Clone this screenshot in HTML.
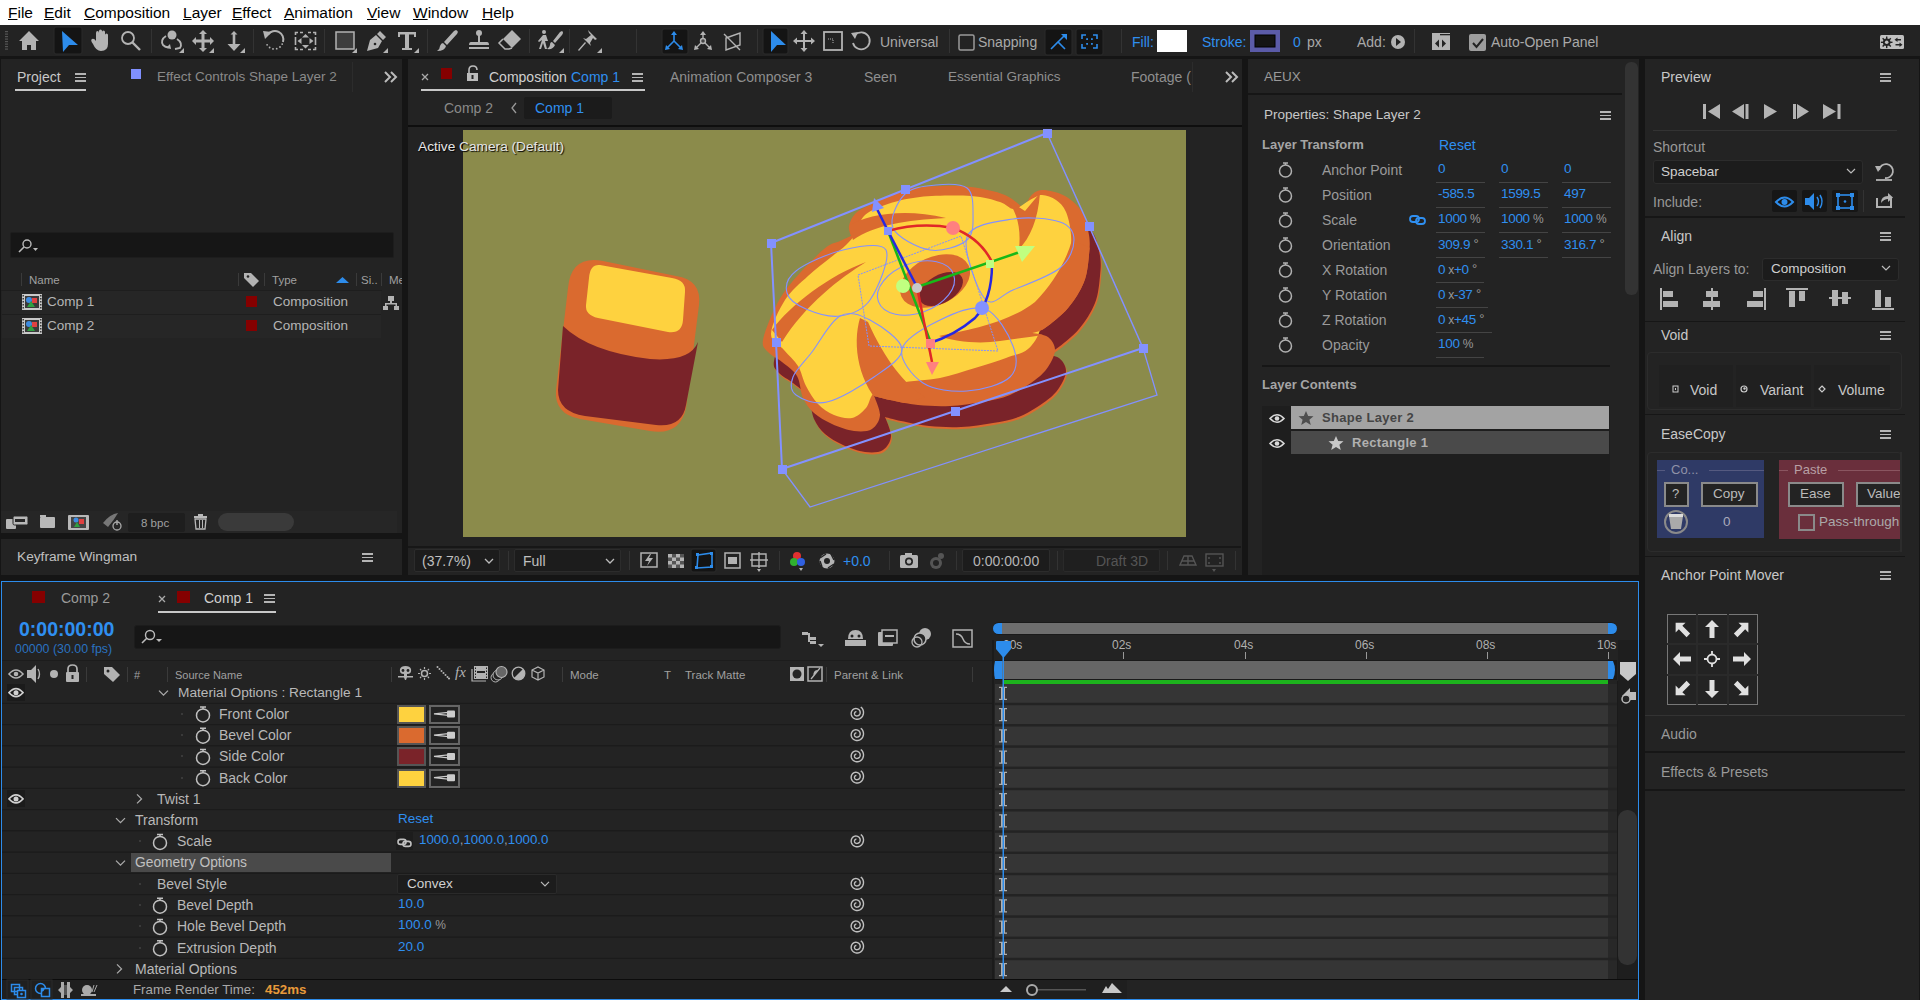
<!DOCTYPE html>
<html><head><meta charset="utf-8">
<style>
*{box-sizing:border-box;margin:0;padding:0}
html,body{width:1920px;height:1000px;overflow:hidden;background:#151515;font-family:"Liberation Sans",sans-serif;font-size:14px;color:#a9a9a9}
.a{position:absolute}
.t{position:absolute;white-space:nowrap;line-height:16px}
.pnl{position:absolute;background:#232323}
.blue{color:#2f8ff0}
.ham{position:absolute;width:11px;height:9px;background:linear-gradient(#b4b4b4 0 1.6px,transparent 1.6px 3.7px,#b4b4b4 3.7px 5.3px,transparent 5.3px 7.4px,#b4b4b4 7.4px 9px)}
svg{position:absolute;overflow:visible}
</style></head><body>

<!-- MENU BAR -->
<div class="a" style="left:0;top:0;width:1920px;height:25px;background:#fff"></div>
<div class="t" style="left:8px;top:4px;font-size:15.5px;color:#000;line-height:18px"><u>F</u>ile</div>
<div class="t" style="left:44px;top:4px;font-size:15.5px;color:#000;line-height:18px"><u>E</u>dit</div>
<div class="t" style="left:84px;top:4px;font-size:15.5px;color:#000;line-height:18px"><u>C</u>omposition</div>
<div class="t" style="left:183px;top:4px;font-size:15.5px;color:#000;line-height:18px"><u>L</u>ayer</div>
<div class="t" style="left:232px;top:4px;font-size:15.5px;color:#000;line-height:18px"><u>E</u>ffect</div>
<div class="t" style="left:284px;top:4px;font-size:15.5px;color:#000;line-height:18px"><u>A</u>nimation</div>
<div class="t" style="left:367px;top:4px;font-size:15.5px;color:#000;line-height:18px"><u>V</u>iew</div>
<div class="t" style="left:413px;top:4px;font-size:15.5px;color:#000;line-height:18px"><u>W</u>indow</div>
<div class="t" style="left:482px;top:4px;font-size:15.5px;color:#000;line-height:18px"><u>H</u>elp</div>


<!-- TOOLBAR -->
<div class="a" style="left:0;top:25px;width:1920px;height:31px;background:#232323"></div>


<svg class="a" style="left:0;top:0" width="1920" height="60" viewBox="0 0 1920 60">
 <g fill="#b3b3b3" stroke="none">
  <!-- grip -->
  <g fill="#555"><rect x="5" y="31.0" width="3" height="1.2"/><rect x="5" y="33.5" width="3" height="1.2"/><rect x="5" y="36.0" width="3" height="1.2"/><rect x="5" y="38.5" width="3" height="1.2"/><rect x="5" y="41.0" width="3" height="1.2"/><rect x="5" y="43.5" width="3" height="1.2"/><rect x="5" y="46.0" width="3" height="1.2"/><rect x="5" y="48.5" width="3" height="1.2"/></g>
  <!-- home -->
  <path d="M29 31 L19 41 L22 41 L22 50 L27 50 L27 45 L31 45 L31 50 L36 50 L36 41 L39 41 Z"/>
  <!-- selection box -->
  <rect x="54" y="27" width="28" height="27" rx="2" fill="#141414" stroke="#2a2a2a"/>
  <path d="M62 31 L78 45 L69 45 L63 52 Z" fill="#2d8ceb"/>
  <!-- hand -->
  <path d="M93 44 Q90 40 92 39 Q94 38 96 41 L96 33 Q96 31 97.5 31 Q99 31 99 33 L99 39 L99 31 Q99 29.5 100.5 29.5 Q102 29.5 102 31 L102 39 L102 32 Q102 30.5 103.5 30.5 Q105 30.5 105 32 L105 40 L105 35 Q105 33.5 106.5 33.5 Q108 33.5 108 35 L108 44 Q108 51 101 51 Q96 51 93 44Z"/>
  <!-- zoom -->
  <circle cx="128" cy="38" r="6" fill="none" stroke="#b3b3b3" stroke-width="1.8"/>
  <path d="M132 42 L140 50" stroke="#b3b3b3" stroke-width="2.4"/>
  <rect x="151" y="29" width="1" height="24" fill="#333"/>
  <!-- orbit -->
  <circle cx="172" cy="35" r="4.5"/>
  <path d="M166 36 Q160 40 163 45 Q166 48 170 47 M177 39 Q183 43 180 48 L175 49" fill="none" stroke="#b3b3b3" stroke-width="1.8"/>
  <path d="M166 48 L170 44 L171 49Z"/>
  <path d="M179 53 L184 48 L184 53Z"/>
  <!-- pan cross -->
  <path d="M203 30 L207 34 L204.5 34 L204.5 39.5 L210 39.5 L210 37 L214 41 L210 45 L210 42.5 L204.5 42.5 L204.5 48 L207 48 L203 52 L199 48 L201.5 48 L201.5 42.5 L196 42.5 L196 45 L192 41 L196 37 L196 39.5 L201.5 39.5 L201.5 34 L199 34Z"/>
  <path d="M209 53 L214 48 L214 53Z"/>
  <!-- dolly -->
  <path d="M234 31 L237.5 34.5 L235.3 34.5 L235.3 44 L240.5 44 L234 51 L227.5 44 L232.7 44 L232.7 34.5 L230.5 34.5Z"/>
  <path d="M240 53 L245 48 L245 53Z"/>
  <rect x="253" y="29" width="1" height="24" fill="#333"/>
  <!-- rotate -->
  <path d="M268 34.5 A8.5 8.5 0 0 1 283 42" fill="none" stroke="#b3b3b3" stroke-width="2"/>
  <path d="M263 31 L272 32 L265 39 Z"/>
  <circle cx="282.2" cy="44.1" r="0.9"/><circle cx="280.0" cy="47.0" r="0.9"/><circle cx="276.7" cy="48.7" r="0.9"/><circle cx="273.0" cy="48.9" r="0.9"/><circle cx="269.6" cy="47.5" r="0.9"/><circle cx="267.1" cy="44.8" r="0.9"/>
  <!-- roto box -->
  <path d="M295.5 35 L295.5 32.5 L298 32.5 M300 32.5 L303 32.5 M308 32.5 L311 32.5 M313 32.5 L315.5 32.5 L315.5 35 M315.5 47 L315.5 49.5 L313 49.5 M311 49.5 L308 49.5 M303 49.5 L300 49.5 M298 49.5 L295.5 49.5 L295.5 47 M295.5 37 L295.5 45 M315.5 37 L315.5 45" fill="none" stroke="#b3b3b3" stroke-width="1.6" stroke-dasharray="none"/>
  <path d="M302 37.5 L305.5 34 L309 37.5Z M302 45 L305.5 48.5 L309 45Z M297.5 41 L301.5 38 L301.5 44Z M313.5 41 L309.5 38 L309.5 44Z"/>
  <rect x="324" y="29" width="1" height="24" fill="#333"/>
  <!-- rectangle -->
  <rect x="336" y="32" width="18" height="17" fill="#3d3d3d" stroke="#b3b3b3" stroke-width="1.5"/>
  <path d="M352 53 L357 48 L357 53Z"/>
  <!-- pen -->
  <path d="M380 31 L386 37 L383 40 L377 34Z M376 35 L382 41 L378 48 L367 51 L370 40Z"/>
  <circle cx="375" cy="44" r="1.3" fill="#232323"/>
  <path d="M383 53 L388 48 L388 53Z"/>
  <!-- T -->
  <path d="M398 32 L416 32 L416 37 L414 37 L414 34.5 L409 34.5 L409 48 L412 48 L412 50 L402 50 L402 48 L405 48 L405 34.5 L400 34.5 L400 37 L398 37Z"/>
  <path d="M414 53 L419 48 L419 53Z"/>
  <rect x="427" y="29" width="1" height="24" fill="#333"/>
  <!-- brush -->
  <path d="M456 30 Q459 31 457 34 L447 45 L444 42 L454 31Z M443 43 L446 46 Q445 51 437 51 Q440 49 440 46 Q441 43 443 43Z"/>
  <!-- stamp -->
  <circle cx="479" cy="33" r="3"/>
  <path d="M478 35 L480 35 L480 42 L487 42 Q489 42 489 45 L469 45 Q469 42 471 42 L478 42Z"/>
  <rect x="469" y="47" width="20" height="2"/>
  <!-- eraser -->
  <path d="M512 30 L521 39 L512 48 L503 39Z"/>
  <path d="M503 39 L499 43 L505 49 L509 49 L512 48" fill="none" stroke="#b3b3b3" stroke-width="1.5"/>
  <rect x="529" y="29" width="1" height="24" fill="#333"/>
  <!-- roto brush -->
  <circle cx="544" cy="32" r="2"/>
  <path d="M543 35 L546 35 L548 41 L545 41 L547 49 L545 49 L543 43 L541 49 L539 49 L542 40 L539 42 L538 41 Z"/>
  <path d="M562 31 Q564 32 562 35 L555 43 L553 41 L560 32Z M552 42 L555 45 Q553 50 547 49 Q550 47 550 45 Q550 42 552 42Z"/>
  <path d="M559 53 L564 48 L564 53Z"/>
  <rect x="569" y="29" width="1" height="24" fill="#333"/>
  <!-- pin -->
  <path d="M588 30 L597 39 L595 40 L593 38 L590 43 L591 46 L583 38 L586 39 L591 35 L589 33Z M586 43 L579 51 L578 50 L585 42Z"/>
  <path d="M597 53 L602 48 L602 53Z"/>
  <rect x="636" y="29" width="1" height="24" fill="#333"/>
  <!-- axis box blue -->
  <rect x="662" y="29" width="26" height="25" rx="2" fill="#141414" stroke="#2a2a2a"/>
  <g stroke="#2d8ceb" stroke-width="1.6" fill="#2d8ceb">
   <path d="M674 41 L674 34 M674 41 L667 48 M674 41 L681 48" fill="none"/>
   <path d="M674 31 L677 35 L671 35Z M665 50 L666 45 L670 49Z M683 50 L678 49 L682 45Z" stroke="none"/>
  </g>
  <g stroke="#b3b3b3" stroke-width="1.4" fill="#b3b3b3">
   <path d="M703 39 L703 34 M701 43 L696 48 M705 43 L710 48" fill="none"/>
   <circle cx="703" cy="41" r="2.5" fill="#444"/>
   <path d="M703 31 L706 35 L700 35Z M694 50 L695 45 L699 49Z M712 50 L707 49 L711 45Z" stroke="none"/>
  </g>
  <g stroke="#b3b3b3" stroke-width="1.4" fill="none">
   <path d="M726 38 L740 33 L740 45 L726 50Z M724 34 L740 50"/>
  </g>
  <rect x="757" y="29" width="1" height="24" fill="#333"/>
  <rect x="763" y="28" width="25" height="26" rx="2" fill="#141414" stroke="#2a2a2a"/>
  <path d="M771 31 L786 45 L777 45 L771 52 Z" fill="#2d8ceb"/>
  <!-- move -->
  <path d="M804 30 L807.5 34 L805 34 L805 40 L811 40 L811 37.5 L815 41 L811 44.5 L811 42 L805 42 L805 48 L807.5 48 L804 52 L800.5 48 L803 48 L803 42 L797 42 L797 44.5 L793 41 L797 37.5 L797 40 L803 40 L803 34 L800.5 34Z"/>
  <!-- scale -->
  <rect x="824" y="32" width="18" height="18" fill="none" stroke="#b3b3b3" stroke-width="1.8"/>
  <path d="M828 39 L833 39 L833 44" fill="none" stroke="#b3b3b3" stroke-width="1" stroke-dasharray="1 1"/>
  <!-- rotate -->
  <path d="M855 35 A8.5 8.5 0 1 1 853 43" fill="none" stroke="#b3b3b3" stroke-width="1.8"/>
  <path d="M851 33 L858 32 L855 39Z"/>
  <rect x="949" y="29" width="1" height="24" fill="#333"/>
  <!-- snapping checkbox -->
  <rect x="959" y="35" width="15" height="15" rx="1.5" fill="none" stroke="#9a9a9a" stroke-width="1.5"/>
  <rect x="1045" y="29" width="27" height="26" rx="2" fill="#141414" stroke="#2a2a2a"/>
  <path d="M1051 49 L1058 42 L1065 49 M1058 42 L1064 36" fill="none" stroke="#2d8ceb" stroke-width="1.6"/>
  <path d="M1067 34 L1067 40 L1061 34Z" fill="#2d8ceb"/>
  <rect x="1076" y="29" width="27" height="26" rx="2" fill="#141414" stroke="#2a2a2a"/>
  <path d="M1082 39 L1082 35 L1086 35 M1093 35 L1097 35 L1097 39 M1097 44 L1097 48 L1093 48 M1086 48 L1082 48 L1082 44 M1087 40 L1087 39 L1088 39 M1091 39 L1092 39 L1092 40 M1092 43 L1092 44 L1091 44 M1088 44 L1087 44 L1087 43" fill="none" stroke="#2d8ceb" stroke-width="1.6"/>
  <rect x="1121" y="29" width="1" height="24" fill="#333"/>
  <rect x="1157" y="30" width="30" height="22" fill="#fff"/>
  <rect x="1250" y="30" width="30" height="22" fill="#5b5ba8"/>
  <rect x="1255" y="35" width="20" height="12" fill="#141414" stroke="#000" stroke-width="1"/>
  <circle cx="1398" cy="42" r="7"/>
  <path d="M1396 38 L1401 42 L1396 46Z" fill="#232323"/>
  <rect x="1414" y="29" width="1" height="24" fill="#333"/>
  <rect x="1432" y="33" width="18" height="17"/><rect x="1440" y="34" width="10" height="1.3" fill="#232323"/><path d="M1435 43.5 L1439 39.5 L1439 47.5Z M1446 43.5 L1442 39.5 L1442 47.5Z" fill="#232323"/>
  <rect x="1469" y="34" width="17" height="17" rx="2" fill="#9d9d9d"/>
  <path d="M1473 43 L1476.5 47 L1483 39" fill="none" stroke="#232323" stroke-width="2"/>
  <rect x="1880" y="35" width="24" height="14" rx="1.5" fill="#c0c0c0"/>
  <circle cx="1886.7" cy="42.3" r="3.8" fill="#232323"/><rect x="1886" y="36.5" width="1.4" height="2.5" fill="#232323" transform="rotate(0 1886.7 42.3)"/><rect x="1886" y="36.5" width="1.4" height="2.5" fill="#232323" transform="rotate(45 1886.7 42.3)"/><rect x="1886" y="36.5" width="1.4" height="2.5" fill="#232323" transform="rotate(90 1886.7 42.3)"/><rect x="1886" y="36.5" width="1.4" height="2.5" fill="#232323" transform="rotate(135 1886.7 42.3)"/><rect x="1886" y="36.5" width="1.4" height="2.5" fill="#232323" transform="rotate(180 1886.7 42.3)"/><rect x="1886" y="36.5" width="1.4" height="2.5" fill="#232323" transform="rotate(225 1886.7 42.3)"/><rect x="1886" y="36.5" width="1.4" height="2.5" fill="#232323" transform="rotate(270 1886.7 42.3)"/><rect x="1886" y="36.5" width="1.4" height="2.5" fill="#232323" transform="rotate(315 1886.7 42.3)"/><circle cx="1886.7" cy="42.3" r="1.8" fill="#c0c0c0"/>
  <path d="M1897 39.8 L1901 39.8 M1895.5 44.7 L1900 44.7" stroke="#232323" stroke-width="1.6"/><path d="M1894.5 39.8 L1897.5 37.5 L1897.5 42Z M1902.5 44.7 L1899.5 42.5 L1899.5 47Z" fill="#232323"/>
 </g>
</svg>
<div class="t" style="left:880px;top:34px;color:#a9a9a9">Universal</div>
<div class="t" style="left:978px;top:34px;color:#a9a9a9">Snapping</div>
<div class="t" style="left:1132px;top:34px;color:#2f8ff0">Fill:</div>
<div class="t" style="left:1202px;top:34px;color:#2f8ff0">Stroke:</div>
<div class="t" style="left:1293px;top:34px;color:#2f8ff0">0</div>
<div class="t" style="left:1307px;top:34px;color:#a9a9a9">px</div>
<div class="t" style="left:1357px;top:34px;color:#a9a9a9">Add:</div>
<div class="t" style="left:1491px;top:34px;color:#a9a9a9">Auto-Open Panel</div>

<!-- PANELS -->
<div class="pnl" style="left:1px;top:59px;width:401px;height:474px"></div>
<div class="pnl" style="left:1px;top:539px;width:401px;height:36px"></div>
<div class="pnl" style="left:408px;top:59px;width:834px;height:516px"></div>
<div class="pnl" style="left:1248px;top:59px;width:391px;height:516px"></div>
<div class="pnl" style="left:1645px;top:59px;width:274px;height:941px"></div>
<div class="pnl" style="left:1px;top:581px;width:1638px;height:419px;border:1px solid #2d8ceb"></div>


<!-- PROJECT PANEL CONTENT -->
<div class="t" style="left:17px;top:69px;color:#c8c8c8">Project</div>
<div class="ham" style="left:75px;top:73px"></div>
<div class="a" style="left:15px;top:89px;width:71px;height:2px;background:#c8c8c8"></div>
<div class="a" style="left:131px;top:69px;width:10px;height:10px;background:#8090ff"></div>
<div class="t" style="left:157px;top:69px;color:#8a8a8a;font-size:13.5px">Effect Controls Shape Layer 2</div>
<div class="a" style="left:352px;top:62px;width:1px;height:30px;background:#2c2c2c"></div>
<svg style="left:0;top:0" width="1" height="1"><path d="M385 72 L390 77 L385 82 M391 72 L396 77 L391 82" fill="none" stroke="#bbb" stroke-width="2"/></svg>
<!-- search -->
<div class="a" style="left:10px;top:232px;width:384px;height:26px;background:#161616;border:1px solid #1d1d1d;border-radius:2px"></div>
<svg style="left:0;top:0" width="1" height="1"><circle cx="27" cy="244" r="4" fill="none" stroke="#bbb" stroke-width="1.4"/><path d="M24 247 L19 252" stroke="#bbb" stroke-width="1.6"/><path d="M33 248 L38 248 L35.5 251Z" fill="#bbb"/></svg>
<!-- header -->
<div class="a" style="left:1px;top:266px;width:401px;height:24px;background:#232323"></div>
<div class="a" style="left:21px;top:273px;width:1px;height:13px;background:#3a3a3a"></div>
<div class="t" style="left:29px;top:272px;font-size:11.5px;color:#a0a0a0">Name</div>
<div class="a" style="left:238px;top:273px;width:1px;height:13px;background:#3a3a3a"></div>
<svg style="left:0;top:0" width="1" height="1"><path d="M244 273 L251 273 L259 281 L253 287 L244 278Z" fill="#b3b3b3"/><circle cx="248" cy="276.5" r="1.3" fill="#232323"/></svg>
<div class="a" style="left:264px;top:273px;width:1px;height:13px;background:#3a3a3a"></div>
<div class="t" style="left:272px;top:272px;font-size:11.5px;color:#a0a0a0">Type</div>
<svg style="left:0;top:0" width="1" height="1"><path d="M336 283 L342.5 277 L349 283Z" fill="#2d8ceb"/></svg>
<div class="a" style="left:356px;top:273px;width:1px;height:13px;background:#3a3a3a"></div>
<div class="t" style="left:361px;top:272px;font-size:11.5px;color:#a0a0a0">Si..</div>
<div class="a" style="left:381px;top:273px;width:1px;height:13px;background:#3a3a3a"></div>
<div class="a" style="left:389px;top:272px;width:13px;height:16px;overflow:hidden"><div class="t" style="left:0;top:0;font-size:11.5px;color:#a0a0a0">Me</div></div>
<div class="a" style="left:1px;top:290px;width:381px;height:1px;background:#1e1e1e"></div>
<!-- rows -->
<div class="a" style="left:2px;top:291px;width:379px;height:23px;background:#262626"></div>
<div class="a" style="left:2px;top:314px;width:379px;height:1px;background:#1e1e1e"></div>
<div class="a" style="left:2px;top:315px;width:379px;height:23px;background:#262626"></div>
<svg style="left:0;top:0" width="1" height="1"><rect x="22" y="294" width="20" height="16" fill="#c8c8c8"/><rect x="25" y="296" width="14" height="12" fill="#3a3a3a"/>
<circle cx="29" cy="300" r="3" fill="#3d8be0"/><rect x="32" y="298" width="5" height="5" fill="#e04040"/><path d="M27 307 L31 301 L35 307Z" fill="#30a040"/>
<rect x="22.5" y="295" width="1.5" height="1.5" fill="#3a3a3a"/><rect x="40" y="295" width="1.5" height="1.5" fill="#3a3a3a"/><rect x="22.5" y="298" width="1.5" height="1.5" fill="#3a3a3a"/><rect x="40" y="298" width="1.5" height="1.5" fill="#3a3a3a"/><rect x="22.5" y="301" width="1.5" height="1.5" fill="#3a3a3a"/><rect x="40" y="301" width="1.5" height="1.5" fill="#3a3a3a"/><rect x="22.5" y="304" width="1.5" height="1.5" fill="#3a3a3a"/><rect x="40" y="304" width="1.5" height="1.5" fill="#3a3a3a"/><rect x="22.5" y="307" width="1.5" height="1.5" fill="#3a3a3a"/><rect x="40" y="307" width="1.5" height="1.5" fill="#3a3a3a"/></svg><div class="t" style="left:47px;top:294px;font-size:13.5px;color:#b5b5b5">Comp 1</div><div class="a" style="left:246px;top:296px;width:11px;height:11px;background:#850000"></div><div class="t" style="left:273px;top:294px;font-size:13.5px;color:#b5b5b5">Composition</div><svg style="left:0;top:0" width="1" height="1"><rect x="22" y="318" width="20" height="16" fill="#c8c8c8"/><rect x="25" y="320" width="14" height="12" fill="#3a3a3a"/>
<circle cx="29" cy="324" r="3" fill="#3d8be0"/><rect x="32" y="322" width="5" height="5" fill="#e04040"/><path d="M27 331 L31 325 L35 331Z" fill="#30a040"/>
<rect x="22.5" y="319" width="1.5" height="1.5" fill="#3a3a3a"/><rect x="40" y="319" width="1.5" height="1.5" fill="#3a3a3a"/><rect x="22.5" y="322" width="1.5" height="1.5" fill="#3a3a3a"/><rect x="40" y="322" width="1.5" height="1.5" fill="#3a3a3a"/><rect x="22.5" y="325" width="1.5" height="1.5" fill="#3a3a3a"/><rect x="40" y="325" width="1.5" height="1.5" fill="#3a3a3a"/><rect x="22.5" y="328" width="1.5" height="1.5" fill="#3a3a3a"/><rect x="40" y="328" width="1.5" height="1.5" fill="#3a3a3a"/><rect x="22.5" y="331" width="1.5" height="1.5" fill="#3a3a3a"/><rect x="40" y="331" width="1.5" height="1.5" fill="#3a3a3a"/></svg><div class="t" style="left:47px;top:318px;font-size:13.5px;color:#b5b5b5">Comp 2</div><div class="a" style="left:246px;top:320px;width:11px;height:11px;background:#850000"></div><div class="t" style="left:273px;top:318px;font-size:13.5px;color:#b5b5b5">Composition</div><svg style="left:0;top:0" width="1" height="1"><g fill="#b3b3b3"><rect x="388" y="296" width="6" height="5"/><rect x="390" y="301" width="2" height="3"/><rect x="385" y="303" width="12" height="1.5"/><rect x="385" y="303" width="1.5" height="4"/><rect x="395.5" y="303" width="1.5" height="4"/><rect x="383" y="306" width="5" height="4"/><rect x="394" y="306" width="5" height="4"/></g></svg>
<div class="a" style="left:2px;top:511px;width:215px;height:1px;background:#0e0e0e"></div>
<div class="a" style="left:1px;top:511px;width:396px;height:22px;background:#262626"></div>
<svg style="left:0;top:0" width="1" height="1"><g fill="#b8b8b8">
<rect x="6" y="519" width="10" height="10" rx="1"/><rect x="13" y="516" width="15" height="9" rx="1.5" stroke="#262626" stroke-width="1"/><rect x="15" y="519" width="10" height="3" fill="#262626"/>
<rect x="40" y="517" width="15" height="11" rx="1"/><rect x="40" y="515" width="6" height="2"/>
<rect x="68" y="515" width="21" height="15" rx="1"/><rect x="71" y="517" width="15" height="11" fill="#444"/><circle cx="76" cy="520" r="2.5" fill="#3d8be0"/><rect x="79" y="519" width="5" height="5" fill="#e04040"/><path d="M74 527 L77 522 L80 527Z" fill="#30a040"/>
<path d="M103 523 Q110 514 118 513 Q114 520 108 527Z" fill="#777"/>
<circle cx="117" cy="526" r="4" fill="none" stroke="#aaa" stroke-width="1.3"/><rect x="116.3" y="520" width="1.4" height="5" fill="#aaa"/>
<rect x="194" y="516" width="13" height="2"/><rect x="198" y="514" width="5" height="2"/><path d="M195 519 L206 519 L205 529 L196 529Z" fill="none" stroke="#b8b8b8" stroke-width="1.3"/><rect x="199" y="520" width="1" height="8"/><rect x="202" y="520" width="1" height="8"/>
</g></svg>
<div class="a" style="left:128px;top:513px;width:57px;height:19px;background:#1e1e1e;border-radius:2px"></div>
<div class="t" style="left:141px;top:515px;font-size:11.5px;color:#a0a0a0">8 bpc</div>
<div class="a" style="left:218px;top:513px;width:76px;height:18px;background:#3a3a3a;border-radius:9px"></div>
<!-- KEYFRAME WINGMAN -->
<div class="t" style="left:17px;top:549px;font-size:13.7px;color:#c0c0c0">Keyframe Wingman</div>
<div class="ham" style="left:362px;top:553px"></div>


<!-- COMP PANEL -->
<svg style="left:0;top:0" width="1" height="1"><path d="M422 74 L428 80 M428 74 L422 80" stroke="#aaa" stroke-width="1.3"/>
<rect x="441" y="68" width="11" height="11" fill="#850000"/>
<path d="M469 73 L469 70 Q469 66 473 66 Q477 66 477 70" fill="none" stroke="#bbb" stroke-width="1.6"/><rect x="467" y="73" width="11" height="8" fill="#bbb"/><rect x="471.5" y="75" width="2" height="4" fill="#232323"/></svg>
<div class="t" style="left:489px;top:69px;color:#d0d0d0">Composition</div>
<div class="t" style="left:571px;top:69px;color:#2f8ff0">Comp 1</div>
<div class="ham" style="left:632px;top:73px"></div>
<div class="a" style="left:421px;top:89px;width:224px;height:2px;background:#c8c8c8"></div>
<div class="t" style="left:670px;top:69px;color:#8f8f8f">Animation Composer 3</div>
<div class="t" style="left:864px;top:69px;color:#8f8f8f">Seen</div>
<div class="t" style="left:948px;top:69px;color:#8f8f8f;font-size:13.5px">Essential Graphics</div>
<div class="t" style="left:1131px;top:69px;color:#8f8f8f">Footage (</div>
<div class="a" style="left:1192px;top:62px;width:1px;height:30px;background:#2c2c2c"></div>
<svg style="left:0;top:0" width="1" height="1"><path d="M1226 72 L1231 77 L1226 82 M1232 72 L1237 77 L1232 82" fill="none" stroke="#bbb" stroke-width="2"/></svg>
<div class="t" style="left:444px;top:100px;color:#8a8a8a">Comp 2</div>
<svg style="left:0;top:0" width="1" height="1"><path d="M516 103 L512 108 L516 113" fill="none" stroke="#999" stroke-width="1.3"/></svg>
<div class="a" style="left:524px;top:97px;width:88px;height:22px;background:#1b1b1b;border-radius:2px"></div>
<div class="t" style="left:535px;top:100px;color:#2f8ff0">Comp 1</div>
<div class="a" style="left:408px;top:125px;width:834px;height:2px;background:#0e0e0e"></div>
<!-- viewer -->
<div class="a" style="left:463px;top:130px;width:723px;height:407px;background:#8b8b4b"></div>
<div class="t" style="left:418px;top:139px;color:#e6e6e6;font-size:13.7px;text-shadow:1px 1px 1px #000">Active Camera (Default)</div>
<!--SWIRL-->
<svg style="left:0;top:0" width="1920" height="1000" viewBox="0 0 1920 1000">
 <defs><clipPath id="vc"><rect x="463" y="130" width="723" height="407"/></clipPath><clipPath id="bc"><path d="M763.0 340.0 C764.2 332.7 770.2 317.7 775.0 308.0 C779.8 298.3 783.8 291.8 792.0 282.0 C800.2 272.2 816.0 255.8 824.0 249.0 C832.0 242.2 835.5 243.2 840.0 241.0 C844.5 238.8 851.0 236.0 851.0 236.0 C851.0 236.0 848.3 229.7 849.0 226.0 C849.7 222.3 851.8 217.3 855.0 214.0 C858.2 210.7 859.8 210.0 868.0 206.0 C876.2 202.0 892.0 193.3 904.0 190.0 C916.0 186.7 928.8 186.5 940.0 186.0 C951.2 185.5 960.2 185.5 971.0 187.0 C981.8 188.5 996.0 191.2 1005.0 195.0 C1014.0 198.8 1025.0 210.0 1025.0 210.0 C1025.0 210.0 1027.2 200.3 1030.0 197.0 C1032.8 193.7 1036.2 190.2 1042.0 190.0 C1047.8 189.8 1058.3 192.3 1065.0 196.0 C1071.7 199.7 1078.0 205.5 1082.0 212.0 C1086.0 218.5 1087.8 227.8 1089.0 235.0 C1090.2 242.2 1089.8 247.2 1089.0 255.0 C1088.2 262.8 1087.5 273.2 1084.0 282.0 C1080.5 290.8 1074.5 300.3 1068.0 308.0 C1061.5 315.7 1051.0 323.8 1045.0 328.0 C1039.0 332.2 1032.0 333.0 1032.0 333.0 C1032.0 333.0 1044.2 334.2 1048.0 337.0 C1051.8 339.8 1055.0 345.0 1055.0 350.0 C1055.0 355.0 1051.3 362.0 1048.0 367.0 C1044.7 372.0 1041.3 375.3 1035.0 380.0 C1028.7 384.7 1018.8 391.3 1010.0 395.0 C1001.2 398.7 992.0 400.2 982.0 402.0 C972.0 403.8 960.7 405.5 950.0 406.0 C939.3 406.5 928.0 406.0 918.0 405.0 C908.0 404.0 897.3 401.5 890.0 400.0 C882.7 398.5 874.0 396.0 874.0 396.0 C874.0 396.0 880.3 409.5 880.0 415.0 C879.7 420.5 876.3 426.3 872.0 429.0 C867.7 431.7 860.7 431.8 854.0 431.0 C847.3 430.2 838.7 427.0 832.0 424.0 C825.3 421.0 818.8 417.3 814.0 413.0 C809.2 408.7 805.8 404.2 803.0 398.0 C800.2 391.8 800.5 382.0 797.0 376.0 C793.5 370.0 786.8 366.0 782.0 362.0 C777.2 358.0 771.2 355.7 768.0 352.0 C764.8 348.3 761.8 347.3 763.0 340.0 Z"/></clipPath></defs>
 <g clip-path="url(#vc)">
 
 <path d="M603 261 Q571 255 568 288 L556 390 Q554 414 580 419 L650 431 Q680 436 686 408 L699 305 Q702 280 676 276 Z" fill="#da6a2f"/>
 <path d="M563 326 Q590 352 650 359 Q690 362 698 342 L686 405 Q682 428 656 425 L585 416 Q558 412 558 390 Z" fill="#7a2329"/>
 <path d="M600 265 Q590 264 589 278 L586 305 Q585 315 598 318 L668 332 Q682 334 683 320 L685 292 Q686 280 672 278 Z" fill="#fed23f"/>

 <path d="M763.0 340.0 C764.2 332.7 770.2 317.7 775.0 308.0 C779.8 298.3 783.8 291.8 792.0 282.0 C800.2 272.2 816.0 255.8 824.0 249.0 C832.0 242.2 835.5 243.2 840.0 241.0 C844.5 238.8 851.0 236.0 851.0 236.0 C851.0 236.0 848.3 229.7 849.0 226.0 C849.7 222.3 851.8 217.3 855.0 214.0 C858.2 210.7 859.8 210.0 868.0 206.0 C876.2 202.0 892.0 193.3 904.0 190.0 C916.0 186.7 928.8 186.5 940.0 186.0 C951.2 185.5 960.2 185.5 971.0 187.0 C981.8 188.5 996.0 191.2 1005.0 195.0 C1014.0 198.8 1025.0 210.0 1025.0 210.0 C1025.0 210.0 1027.2 200.3 1030.0 197.0 C1032.8 193.7 1036.2 190.2 1042.0 190.0 C1047.8 189.8 1058.3 192.3 1065.0 196.0 C1071.7 199.7 1078.0 205.5 1082.0 212.0 C1086.0 218.5 1087.8 227.8 1089.0 235.0 C1090.2 242.2 1089.8 247.2 1089.0 255.0 C1088.2 262.8 1087.5 273.2 1084.0 282.0 C1080.5 290.8 1074.5 300.3 1068.0 308.0 C1061.5 315.7 1051.0 323.8 1045.0 328.0 C1039.0 332.2 1032.0 333.0 1032.0 333.0 C1032.0 333.0 1044.2 334.2 1048.0 337.0 C1051.8 339.8 1055.0 345.0 1055.0 350.0 C1055.0 355.0 1051.3 362.0 1048.0 367.0 C1044.7 372.0 1041.3 375.3 1035.0 380.0 C1028.7 384.7 1018.8 391.3 1010.0 395.0 C1001.2 398.7 992.0 400.2 982.0 402.0 C972.0 403.8 960.7 405.5 950.0 406.0 C939.3 406.5 928.0 406.0 918.0 405.0 C908.0 404.0 897.3 401.5 890.0 400.0 C882.7 398.5 874.0 396.0 874.0 396.0 C874.0 396.0 880.3 409.5 880.0 415.0 C879.7 420.5 876.3 426.3 872.0 429.0 C867.7 431.7 860.7 431.8 854.0 431.0 C847.3 430.2 838.7 427.0 832.0 424.0 C825.3 421.0 818.8 417.3 814.0 413.0 C809.2 408.7 805.8 404.2 803.0 398.0 C800.2 391.8 800.5 382.0 797.0 376.0 C793.5 370.0 786.8 366.0 782.0 362.0 C777.2 358.0 771.2 355.7 768.0 352.0 C764.8 348.3 761.8 347.3 763.0 340.0 Z" fill="#da6a2f" transform="translate(12,23)"/>
 <path d="M763.0 340.0 C764.2 332.7 770.2 317.7 775.0 308.0 C779.8 298.3 783.8 291.8 792.0 282.0 C800.2 272.2 816.0 255.8 824.0 249.0 C832.0 242.2 835.5 243.2 840.0 241.0 C844.5 238.8 851.0 236.0 851.0 236.0 C851.0 236.0 848.3 229.7 849.0 226.0 C849.7 222.3 851.8 217.3 855.0 214.0 C858.2 210.7 859.8 210.0 868.0 206.0 C876.2 202.0 892.0 193.3 904.0 190.0 C916.0 186.7 928.8 186.5 940.0 186.0 C951.2 185.5 960.2 185.5 971.0 187.0 C981.8 188.5 996.0 191.2 1005.0 195.0 C1014.0 198.8 1025.0 210.0 1025.0 210.0 C1025.0 210.0 1027.2 200.3 1030.0 197.0 C1032.8 193.7 1036.2 190.2 1042.0 190.0 C1047.8 189.8 1058.3 192.3 1065.0 196.0 C1071.7 199.7 1078.0 205.5 1082.0 212.0 C1086.0 218.5 1087.8 227.8 1089.0 235.0 C1090.2 242.2 1089.8 247.2 1089.0 255.0 C1088.2 262.8 1087.5 273.2 1084.0 282.0 C1080.5 290.8 1074.5 300.3 1068.0 308.0 C1061.5 315.7 1051.0 323.8 1045.0 328.0 C1039.0 332.2 1032.0 333.0 1032.0 333.0 C1032.0 333.0 1044.2 334.2 1048.0 337.0 C1051.8 339.8 1055.0 345.0 1055.0 350.0 C1055.0 355.0 1051.3 362.0 1048.0 367.0 C1044.7 372.0 1041.3 375.3 1035.0 380.0 C1028.7 384.7 1018.8 391.3 1010.0 395.0 C1001.2 398.7 992.0 400.2 982.0 402.0 C972.0 403.8 960.7 405.5 950.0 406.0 C939.3 406.5 928.0 406.0 918.0 405.0 C908.0 404.0 897.3 401.5 890.0 400.0 C882.7 398.5 874.0 396.0 874.0 396.0 C874.0 396.0 880.3 409.5 880.0 415.0 C879.7 420.5 876.3 426.3 872.0 429.0 C867.7 431.7 860.7 431.8 854.0 431.0 C847.3 430.2 838.7 427.0 832.0 424.0 C825.3 421.0 818.8 417.3 814.0 413.0 C809.2 408.7 805.8 404.2 803.0 398.0 C800.2 391.8 800.5 382.0 797.0 376.0 C793.5 370.0 786.8 366.0 782.0 362.0 C777.2 358.0 771.2 355.7 768.0 352.0 C764.8 348.3 761.8 347.3 763.0 340.0 Z" fill="#7a2329" transform="translate(11,21)"/>
 <path d="M763.0 340.0 C764.2 332.7 770.2 317.7 775.0 308.0 C779.8 298.3 783.8 291.8 792.0 282.0 C800.2 272.2 816.0 255.8 824.0 249.0 C832.0 242.2 835.5 243.2 840.0 241.0 C844.5 238.8 851.0 236.0 851.0 236.0 C851.0 236.0 848.3 229.7 849.0 226.0 C849.7 222.3 851.8 217.3 855.0 214.0 C858.2 210.7 859.8 210.0 868.0 206.0 C876.2 202.0 892.0 193.3 904.0 190.0 C916.0 186.7 928.8 186.5 940.0 186.0 C951.2 185.5 960.2 185.5 971.0 187.0 C981.8 188.5 996.0 191.2 1005.0 195.0 C1014.0 198.8 1025.0 210.0 1025.0 210.0 C1025.0 210.0 1027.2 200.3 1030.0 197.0 C1032.8 193.7 1036.2 190.2 1042.0 190.0 C1047.8 189.8 1058.3 192.3 1065.0 196.0 C1071.7 199.7 1078.0 205.5 1082.0 212.0 C1086.0 218.5 1087.8 227.8 1089.0 235.0 C1090.2 242.2 1089.8 247.2 1089.0 255.0 C1088.2 262.8 1087.5 273.2 1084.0 282.0 C1080.5 290.8 1074.5 300.3 1068.0 308.0 C1061.5 315.7 1051.0 323.8 1045.0 328.0 C1039.0 332.2 1032.0 333.0 1032.0 333.0 C1032.0 333.0 1044.2 334.2 1048.0 337.0 C1051.8 339.8 1055.0 345.0 1055.0 350.0 C1055.0 355.0 1051.3 362.0 1048.0 367.0 C1044.7 372.0 1041.3 375.3 1035.0 380.0 C1028.7 384.7 1018.8 391.3 1010.0 395.0 C1001.2 398.7 992.0 400.2 982.0 402.0 C972.0 403.8 960.7 405.5 950.0 406.0 C939.3 406.5 928.0 406.0 918.0 405.0 C908.0 404.0 897.3 401.5 890.0 400.0 C882.7 398.5 874.0 396.0 874.0 396.0 C874.0 396.0 880.3 409.5 880.0 415.0 C879.7 420.5 876.3 426.3 872.0 429.0 C867.7 431.7 860.7 431.8 854.0 431.0 C847.3 430.2 838.7 427.0 832.0 424.0 C825.3 421.0 818.8 417.3 814.0 413.0 C809.2 408.7 805.8 404.2 803.0 398.0 C800.2 391.8 800.5 382.0 797.0 376.0 C793.5 370.0 786.8 366.0 782.0 362.0 C777.2 358.0 771.2 355.7 768.0 352.0 C764.8 348.3 761.8 347.3 763.0 340.0 Z" fill="#da6a2f"/>
 <path d="M771.0 334.0 C771.2 325.7 778.8 309.7 785.0 300.0 C791.2 290.3 800.5 283.0 808.0 276.0 C815.5 269.0 823.7 263.2 830.0 258.0 C836.3 252.8 841.7 249.2 846.0 245.0 C850.3 240.8 853.0 237.8 856.0 233.0 C859.0 228.2 859.2 220.7 864.0 216.0 C868.8 211.3 875.7 208.2 885.0 205.0 C894.3 201.8 905.7 198.5 920.0 197.0 C934.3 195.5 957.7 195.2 971.0 196.0 C984.3 196.8 992.8 199.8 1000.0 202.0 C1007.2 204.2 1009.0 209.3 1014.0 209.0 C1019.0 208.7 1025.3 202.3 1030.0 200.0 C1034.7 197.7 1037.7 195.0 1042.0 195.0 C1046.3 195.0 1052.0 197.2 1056.0 200.0 C1060.0 202.8 1063.5 206.2 1066.0 212.0 C1068.5 217.8 1070.5 227.3 1071.0 235.0 C1071.5 242.7 1071.5 250.5 1069.0 258.0 C1066.5 265.5 1060.5 272.2 1056.0 280.0 C1051.5 287.8 1044.7 296.7 1042.0 305.0 C1039.3 313.3 1042.3 322.7 1040.0 330.0 C1037.7 337.3 1033.7 344.3 1028.0 349.0 C1022.3 353.7 1014.8 354.8 1006.0 358.0 C997.2 361.2 986.0 364.7 975.0 368.0 C964.0 371.3 952.5 375.5 940.0 378.0 C927.5 380.5 910.8 380.7 900.0 383.0 C889.2 385.3 880.7 387.8 875.0 392.0 C869.3 396.2 869.8 403.7 866.0 408.0 C862.2 412.3 857.3 416.8 852.0 418.0 C846.7 419.2 839.7 417.3 834.0 415.0 C828.3 412.7 822.7 408.8 818.0 404.0 C813.3 399.2 809.3 392.3 806.0 386.0 C802.7 379.7 801.7 372.0 798.0 366.0 C794.3 360.0 788.5 355.3 784.0 350.0 C779.5 344.7 770.8 342.3 771.0 334.0 Z" fill="#fed23f"/>
 <g clip-path="url(#bc)"><path d="M848 226 C868 214, 905 208, 946 218 C905 220, 875 225, 853 240 Z" fill="#da6a2f"/><path d="M1006 199 L1025 211 L1040 193 C1038 220, 1030 238, 1019 249 C1021 230, 1018 212, 1006 199 Z" fill="#da6a2f"/><path d="M939 336 C970 330, 1010 322, 1035 302 C1052 285, 1066 262, 1072 240 L1095 250 L1080 330 L1048 334 C1030 337, 1015 339, 1000 341 C980 344, 955 342, 939 336 Z" fill="#da6a2f"/><path d="M860 318 C852 345, 858 385, 886 410 L925 397 C905 385, 885 360, 868 322 Z" fill="#da6a2f"/><path d="M772 330 C790 305, 830 275, 866 262 C840 278, 805 305, 782 342 Z" fill="#da6a2f"/></g>
 <ellipse cx="935" cy="281" rx="37" ry="24" transform="rotate(-25 935 281)" fill="#da6a2f"/>
 <ellipse cx="941" cy="289" rx="24" ry="14" transform="rotate(-30 941 289)" fill="#7a2329"/>
 </g>
 
 <g fill="none" stroke="#8391ff">
  <path d="M771 243 L1047 133" stroke-width="2"/>
  <path d="M1047 133 L1089 226 L1143 348" stroke-width="1.5"/>
  <path d="M1143 348 L955 411 L782 469" stroke-width="2"/>
  <path d="M782 469 L776 342 L771 243" stroke-width="2"/>
  <path d="M1143 348 L1157 395 L810 507 L782 469" stroke-width="1.3"/>
  <path d="M886.0 250.0 C881.5 241.7 858.0 246.5 843.0 250.0 C828.0 253.5 805.3 263.8 796.0 271.0 C786.7 278.2 785.3 286.7 787.0 293.0 C788.7 299.3 797.2 305.2 806.0 309.0 C814.8 312.8 829.3 317.5 840.0 316.0 C850.7 314.5 862.3 311.0 870.0 300.0 C877.7 289.0 890.5 258.3 886.0 250.0 Z" stroke-width="1.1"/><path d="M893.0 228.0 C888.8 218.7 897.8 201.2 905.0 194.0 C912.2 186.8 925.7 186.0 936.0 185.0 C946.3 184.0 960.8 183.3 967.0 188.0 C973.2 192.7 973.0 204.3 973.0 213.0 C973.0 221.7 974.2 233.8 967.0 240.0 C959.8 246.2 942.3 252.0 930.0 250.0 C917.7 248.0 897.2 237.3 893.0 228.0 Z" stroke-width="1.1"/><path d="M967.0 237.0 C971.7 223.7 997.5 221.5 1013.0 219.0 C1028.5 216.5 1049.8 218.5 1060.0 222.0 C1070.2 225.5 1074.0 232.3 1074.0 240.0 C1074.0 247.7 1070.2 259.7 1060.0 268.0 C1049.8 276.3 1025.5 284.8 1013.0 290.0 C1000.5 295.2 992.7 307.8 985.0 299.0 C977.3 290.2 962.3 250.3 967.0 237.0 Z" stroke-width="1.1"/><path d="M985.0 309.0 C997.2 313.3 1008.8 334.7 1013.0 346.0 C1017.2 357.3 1017.7 369.5 1010.0 377.0 C1002.3 384.5 981.5 390.0 967.0 391.0 C952.5 392.0 933.8 390.0 923.0 383.0 C912.2 376.0 899.2 359.5 902.0 349.0 C904.8 338.5 926.2 326.7 940.0 320.0 C953.8 313.3 972.8 304.7 985.0 309.0 Z" stroke-width="1.1"/><path d="M902.0 349.0 C902.7 358.5 886.5 368.2 874.0 377.0 C861.5 385.8 840.0 399.0 827.0 402.0 C814.0 405.0 801.7 399.2 796.0 395.0 C790.3 390.8 790.3 384.2 793.0 377.0 C795.7 369.8 804.2 362.2 812.0 352.0 C819.8 341.8 830.3 321.3 840.0 316.0 C849.7 310.7 859.7 314.5 870.0 320.0 C880.3 325.5 901.3 339.5 902.0 349.0 Z" stroke-width="1.1"/><ellipse cx="916" cy="288" rx="40" ry="25" transform="rotate(-20 916 288)" stroke-width="1.1"/><path d="M858 275 L961 236 L998 351 L869 346 Z" stroke-width="1" stroke-dasharray="2 1"/>
 </g>
 <g fill="#8391ff">
  <rect x="1043" y="129" width="9" height="9"/><rect x="901" y="185" width="9" height="9"/><rect x="767" y="239" width="9" height="9"/>
  <rect x="1085" y="222" width="9" height="9"/><rect x="772" y="338" width="9" height="9"/><rect x="1139" y="344" width="9" height="9"/>
  <rect x="951" y="407" width="9" height="9"/><rect x="778" y="465" width="9" height="9"/>
 </g>
 <path d="M888 231 Q920 222 953 228 Q980 238 992 262" fill="none" stroke="#e02828" stroke-width="2.5"/>
 <path d="M992 264 Q992 300 975 318 Q955 335 930 343" fill="none" stroke="#2828e0" stroke-width="2.5"/>
 <path d="M888 231 L931 343" stroke="#18b818" stroke-width="2.5"/>
 <path d="M917 287 L1020 252" stroke="#18b818" stroke-width="2.5"/>
 <path d="M1015 246 L1035 246 L1022 262 Z" fill="#c0ff80"/>
 <path d="M888 231 L876 207" stroke="#2828e0" stroke-width="2.5"/>
 <path d="M917 287 L888 231" stroke="#2828e0" stroke-width="2.5"/>
 <path d="M874 198 L884 208 L872 212 Z" fill="#8391ff"/>
 <path d="M917 287 L932 362" stroke="#e02828" stroke-width="2.5"/>
 <path d="M926 362 L939 362 L932 375 Z" fill="#ff8080"/>
 <rect x="884" y="227" width="8" height="8" fill="#8391ff"/>
 <rect x="986" y="260" width="8" height="8" fill="#c0ff80"/>
 <rect x="926" y="339" width="9" height="9" fill="#ff8080"/>
 <circle cx="903" cy="286" r="7" fill="#c0ff80"/>
 <circle cx="953" cy="228" r="7" fill="#ff8080"/>
 <circle cx="982" cy="308" r="7" fill="#8391ff"/>
 <circle cx="917" cy="288" r="5" fill="#c8c8c8"/>

</svg>
<!--/SWIRL-->
<!-- viewer bottom bar -->
<div class="a" style="left:408px;top:545px;width:834px;height:30px;background:#232323"></div><div class="a" style="left:408px;top:546px;width:833px;height:2px;background:#171717"></div>
<div class="a" style="left:414px;top:549px;width:86px;height:23px;background:#1c1c1c;border:1px solid #2c2c2c;border-radius:2px"></div>
<div class="t" style="left:422px;top:553px;color:#c0c0c0">(37.7%)</div>
<div class="a" style="left:508px;top:551px;width:1px;height:19px;background:#333"></div>
<div class="a" style="left:514px;top:549px;width:107px;height:23px;background:#1c1c1c;border:1px solid #2c2c2c;border-radius:2px"></div>
<div class="t" style="left:523px;top:553px;color:#c0c0c0">Full</div>
<svg style="left:0;top:0" width="1" height="1"><g fill="none" stroke="#bbb" stroke-width="1.3">
<path d="M485 559 L489 563 L493 559"/><path d="M606 559 L610 563 L614 559"/></g>
<g fill="#b3b3b3">
<rect x="629" y="551" width="1" height="19" fill="#333"/>
<rect x="641" y="553" width="16" height="14" fill="none" stroke="#b3b3b3" stroke-width="1.5"/><path d="M650 554 L645 561 L649 561 L647 566 L653 558 L649 558 L651 554Z"/>
<rect x="668" y="554" width="16" height="14" fill="#555"/>
<rect x="668" y="554" width="4" height="3.5"/><rect x="676" y="554" width="4" height="3.5"/><rect x="672" y="557.5" width="4" height="3.5"/><rect x="680" y="557.5" width="4" height="3.5"/><rect x="668" y="561" width="4" height="3.5"/><rect x="676" y="561" width="4" height="3.5"/><rect x="672" y="564.5" width="4" height="3.5"/><rect x="680" y="564.5" width="4" height="3.5"/>
<rect x="691" y="549" width="25" height="23" rx="2" fill="#141414" stroke="#2a2a2a"/>
<path d="M698 555 L712 553 L712 567 L697 568 Z" fill="none" stroke="#2d8ceb" stroke-width="1.6"/>
<rect x="696" y="553" width="3" height="3" fill="#2d8ceb"/><rect x="710" y="552" width="3" height="3" fill="#2d8ceb"/><rect x="710" y="565" width="3" height="3" fill="#2d8ceb"/><rect x="695" y="566" width="3" height="3" fill="#2d8ceb"/>
<rect x="725" y="553" width="15" height="15" fill="none" stroke="#b3b3b3" stroke-width="1.5"/><rect x="728" y="557" width="9" height="7"/>
<path d="M752 554 L766 554 L766 566 L752 566Z M759 552 L759 568 M750 560 L768 560" fill="none" stroke="#b3b3b3" stroke-width="1.4"/><path d="M757 569 L761 569 L759 572Z"/>
<rect x="779" y="551" width="1" height="19" fill="#333"/>
<circle cx="797" cy="556" r="4" fill="#e03030"/><circle cx="794" cy="562" r="4" fill="#30b030"/><circle cx="801" cy="562" r="4" fill="#3060e0"/><path d="M799 568 L803 568 L801 571Z"/>
<circle cx="827" cy="561" r="7.5"/><circle cx="827" cy="561" r="3" fill="#232323"/>
<path d="M820 558 L826 554 M831 554 L834 560 M834 564 L828 568 M822 567 L820 561" stroke="#232323" stroke-width="1.5"/>
<rect x="889" y="551" width="1" height="19" fill="#333"/>
<rect x="900" y="555" width="18" height="13" rx="1.5"/><rect x="905" y="553" width="7" height="3"/><circle cx="909" cy="561.5" r="4" fill="#232323"/><circle cx="909" cy="561.5" r="2.3"/>
<g fill="#555"><circle cx="936" cy="563" r="6"/><circle cx="936" cy="563" r="3" fill="#232323"/><circle cx="941" cy="556" r="3"/></g>
<rect x="956" y="551" width="1" height="19" fill="#333"/>
<rect x="1057" y="551" width="1" height="19" fill="#333"/>
<rect x="1167" y="551" width="1" height="19" fill="#333"/>
<g fill="none" stroke="#555" stroke-width="1.4"><path d="M1180 565 L1184 556 L1192 556 L1196 565 Z M1182 561 L1194 561 M1188 556 L1188 565"/>
<rect x="1206" y="554" width="17" height="12"/><path d="M1209 557 L1209 559 M1220 557 L1220 559 M1209 562 L1209 564 M1220 562 L1220 564"/></g>
<path d="M1212 569 L1216 569 L1214 572Z" fill="#555"/>
<rect x="1235" y="551" width="1" height="19" fill="#333"/>
<g fill="none" stroke="#555" stroke-width="1.3"><path d="M1073 556 L1079 553 L1085 556 L1085 563 L1079 566 L1073 563 Z M1073 556 L1079 559 L1085 556 M1079 559 L1079 566"/></g>
</g></svg>
<div class="t" style="left:843px;top:553px;color:#2f8ff0">+0.0</div>
<div class="a" style="left:962px;top:549px;width:88px;height:23px;background:#1c1c1c;border:1px solid #2c2c2c;border-radius:2px"></div>
<div class="t" style="left:973px;top:553px;color:#b5b5b5">0:00:00:00</div>
<div class="a" style="left:1063px;top:549px;width:97px;height:23px;background:#1f1f1f;border:1px solid #2a2a2a;border-radius:2px"></div>
<div class="t" style="left:1096px;top:553px;color:#555">Draft 3D</div>



<!-- AEUX -->
<div class="t" style="left:1264px;top:69px;color:#9a9a9a;font-size:13.5px">AEUX</div>
<div class="a" style="left:1248px;top:93px;width:374px;height:2px;background:#161616"></div>
<div class="a" style="left:1625px;top:62px;width:13px;height:233px;background:#333;border-radius:6px 6px 6px 6px"></div>
<div class="t" style="left:1264px;top:107px;color:#c8c8c8;font-size:13.5px">Properties: Shape Layer 2</div>
<div class="ham" style="left:1600px;top:111px"></div>
<div class="t" style="left:1262px;top:137px;color:#a5a5a5;font-size:13px;font-weight:bold">Layer Transform</div>
<div class="t" style="left:1439px;top:137px;color:#2f8ff0">Reset</div>
<div class="t" style="left:1322px;top:162px;color:#9a9a9a">Anchor Point</div><div class="t" style="left:1438px;top:161px;color:#2f8ff0;font-size:13.5px;letter-spacing:-0.3px">0</div><div class="a" style="left:1436px;top:182px;width:49px;height:1px;background:#444"></div><div class="t" style="left:1501px;top:161px;color:#2f8ff0;font-size:13.5px;letter-spacing:-0.3px">0</div><div class="a" style="left:1499px;top:182px;width:49px;height:1px;background:#444"></div><div class="t" style="left:1564px;top:161px;color:#2f8ff0;font-size:13.5px;letter-spacing:-0.3px">0</div><div class="a" style="left:1562px;top:182px;width:49px;height:1px;background:#444"></div><div class="t" style="left:1322px;top:187px;color:#9a9a9a">Position</div><div class="t" style="left:1438px;top:186px;color:#2f8ff0;font-size:13.5px;letter-spacing:-0.3px">-585.5</div><div class="a" style="left:1436px;top:207px;width:49px;height:1px;background:#444"></div><div class="t" style="left:1501px;top:186px;color:#2f8ff0;font-size:13.5px;letter-spacing:-0.3px">1599.5</div><div class="a" style="left:1499px;top:207px;width:49px;height:1px;background:#444"></div><div class="t" style="left:1564px;top:186px;color:#2f8ff0;font-size:13.5px;letter-spacing:-0.3px">497</div><div class="a" style="left:1562px;top:207px;width:49px;height:1px;background:#444"></div><div class="t" style="left:1322px;top:212px;color:#9a9a9a">Scale</div><div class="t" style="left:1438px;top:211px;color:#2f8ff0;font-size:13.5px;letter-spacing:-0.3px">1000<span style="color:#999;font-size:12px"> %</span></div><div class="a" style="left:1436px;top:232px;width:49px;height:1px;background:#444"></div><div class="t" style="left:1501px;top:211px;color:#2f8ff0;font-size:13.5px;letter-spacing:-0.3px">1000<span style="color:#999;font-size:12px"> %</span></div><div class="a" style="left:1499px;top:232px;width:49px;height:1px;background:#444"></div><div class="t" style="left:1564px;top:211px;color:#2f8ff0;font-size:13.5px;letter-spacing:-0.3px">1000<span style="color:#999;font-size:12px"> %</span></div><div class="a" style="left:1562px;top:232px;width:49px;height:1px;background:#444"></div><div class="t" style="left:1322px;top:237px;color:#9a9a9a">Orientation</div><div class="t" style="left:1438px;top:236px;color:#2f8ff0;font-size:13.5px;letter-spacing:-0.3px">309.9<span style="color:#999;font-size:13px;vertical-align:1px"> °</span></div><div class="a" style="left:1436px;top:257px;width:49px;height:1px;background:#444"></div><div class="t" style="left:1501px;top:236px;color:#2f8ff0;font-size:13.5px;letter-spacing:-0.3px">330.1<span style="color:#999;font-size:13px;vertical-align:1px"> °</span></div><div class="a" style="left:1499px;top:257px;width:49px;height:1px;background:#444"></div><div class="t" style="left:1564px;top:236px;color:#2f8ff0;font-size:13.5px;letter-spacing:-0.3px">316.7<span style="color:#999;font-size:13px;vertical-align:1px"> °</span></div><div class="a" style="left:1562px;top:257px;width:49px;height:1px;background:#444"></div><div class="t" style="left:1322px;top:262px;color:#9a9a9a">X Rotation</div><div class="t" style="left:1438px;top:261px;color:#2f8ff0;font-size:13.5px;letter-spacing:-0.3px">0<span style="color:#999;font-size:12px"> x</span>+0<span style="color:#999;font-size:13px;vertical-align:1px"> °</span></div><div class="a" style="left:1436px;top:282px;width:48px;height:1px;background:#444"></div><div class="t" style="left:1322px;top:287px;color:#9a9a9a">Y Rotation</div><div class="t" style="left:1438px;top:286px;color:#2f8ff0;font-size:13.5px;letter-spacing:-0.3px">0<span style="color:#999;font-size:12px"> x</span>-37<span style="color:#999;font-size:13px;vertical-align:1px"> °</span></div><div class="a" style="left:1436px;top:307px;width:52px;height:1px;background:#444"></div><div class="t" style="left:1322px;top:312px;color:#9a9a9a">Z Rotation</div><div class="t" style="left:1438px;top:311px;color:#2f8ff0;font-size:13.5px;letter-spacing:-0.3px">0<span style="color:#999;font-size:12px"> x</span>+45<span style="color:#999;font-size:13px;vertical-align:1px"> °</span></div><div class="a" style="left:1436px;top:332px;width:56px;height:1px;background:#444"></div><div class="t" style="left:1322px;top:337px;color:#9a9a9a">Opacity</div><div class="t" style="left:1438px;top:336px;color:#2f8ff0;font-size:13.5px;letter-spacing:-0.3px">100<span style="color:#999;font-size:12px"> %</span></div><div class="a" style="left:1436px;top:357px;width:48px;height:1px;background:#444"></div><svg style="left:0;top:0" width="1" height="1"><g fill="none" stroke="#b0b0b0" stroke-width="1.5"><circle cx="1285.5" cy="171" r="6"/><path d="M1283 163 L1288 163 M1285.5 163 L1285.5 165"/><circle cx="1285.5" cy="196" r="6"/><path d="M1283 188 L1288 188 M1285.5 188 L1285.5 190"/><circle cx="1285.5" cy="221" r="6"/><path d="M1283 213 L1288 213 M1285.5 213 L1285.5 215"/><circle cx="1285.5" cy="246" r="6"/><path d="M1283 238 L1288 238 M1285.5 238 L1285.5 240"/><circle cx="1285.5" cy="271" r="6"/><path d="M1283 263 L1288 263 M1285.5 263 L1285.5 265"/><circle cx="1285.5" cy="296" r="6"/><path d="M1283 288 L1288 288 M1285.5 288 L1285.5 290"/><circle cx="1285.5" cy="321" r="6"/><path d="M1283 313 L1288 313 M1285.5 313 L1285.5 315"/><circle cx="1285.5" cy="346" r="6"/><path d="M1283 338 L1288 338 M1285.5 338 L1285.5 340"/></g><g fill="none" stroke="#2f8ff0" stroke-width="1.8"><rect x="1410" y="216" width="9" height="6" rx="3"/><rect x="1416" y="218" width="9" height="6" rx="3"/></g></svg>
<div class="a" style="left:1262px;top:365px;width:348px;height:2px;background:#161616"></div>
<div class="t" style="left:1262px;top:377px;color:#a5a5a5;font-size:13px;font-weight:bold">Layer Contents</div>
<div class="a" style="left:1262px;top:406px;width:348px;height:169px;background:#1e1e1e"></div>
<div class="a" style="left:1291px;top:406px;width:318px;height:23px;background:#a3a3a3"></div>
<div class="a" style="left:1291px;top:431px;width:318px;height:23px;background:#4a4a4a"></div>
<div class="t" style="left:1322px;top:410px;color:#454545;font-size:13px;font-weight:bold;letter-spacing:0.3px">Shape Layer 2</div>
<div class="t" style="left:1352px;top:435px;color:#b0b0b0;font-size:13px;font-weight:bold;letter-spacing:0.3px">Rectangle 1</div>
<svg style="left:0;top:0" width="1" height="1">
<path d="M1306 411 L1308.2 416 L1313.5 416.3 L1309.4 419.7 L1310.8 425 L1306 422 L1301.2 425 L1302.6 419.7 L1298.5 416.3 L1303.8 416 Z" fill="#4e4e4e"/>
<path d="M1336 436 L1338.2 441 L1343.5 441.3 L1339.4 444.7 L1340.8 450 L1336 447 L1331.2 450 L1332.6 444.7 L1328.5 441.3 L1333.8 441 Z" fill="#c8c8c8"/>
<g fill="none" stroke="#d8d8d8" stroke-width="1.6"><path d="M1270 418.5 Q1277 411 1284 418.5 Q1277 426 1270 418.5Z"/><path d="M1270 443.5 Q1277 436 1284 443.5 Q1277 451 1270 443.5Z"/></g>
<circle cx="1277" cy="418.5" r="2.3" fill="#d8d8d8"/><circle cx="1277" cy="443.5" r="2.3" fill="#d8d8d8"/>
</svg>


<!-- RIGHT COLUMN -->
<div class="t" style="left:1661px;top:69px;color:#c8c8c8">Preview</div>
<div class="ham" style="left:1880px;top:73px"></div>
<svg style="left:0;top:0" width="1" height="1"><g fill="#b3b3b3">
<rect x="1703" y="104" width="3" height="15"/><path d="M1720 104 L1720 119 L1708 111.5Z"/>
<path d="M1744 104 L1744 119 L1732 111.5Z"/><rect x="1745.5" y="104" width="3" height="15"/>
<path d="M1764 104 L1764 119 L1777 111.5Z"/>
<rect x="1793" y="104" width="3" height="15"/><path d="M1797 104 L1797 119 L1809 111.5Z"/>
<path d="M1823 104 L1823 119 L1836 111.5Z"/><rect x="1837.5" y="104" width="3" height="15"/>
</g></svg>
<div class="a" style="left:1653px;top:130px;width:244px;height:1px;background:#333"></div>
<div class="t" style="left:1653px;top:139px;color:#999">Shortcut</div>
<div class="a" style="left:1653px;top:160px;width:210px;height:24px;background:#1c1c1c;border:1px solid #2c2c2c;border-radius:3px"></div>
<div class="t" style="left:1661px;top:164px;color:#d0d0d0;font-size:13.5px">Spacebar</div>
<div class="t" style="left:1653px;top:194px;color:#999">Include:</div>
<svg style="left:0;top:0" width="1" height="1">
<path d="M1847 169 L1851 173 L1855 169" fill="none" stroke="#bbb" stroke-width="1.2"/>
<g fill="none" stroke="#b3b3b3" stroke-width="1.8"><path d="M1879 170 A7 7 0 1 1 1885 178"/><path d="M1876 180 L1892 180"/></g>
<path d="M1875 166 L1882 166 L1878 172Z" fill="#b3b3b3"/>
<rect x="1772" y="190" width="25" height="22" rx="2" fill="#161616"/><rect x="1802" y="190" width="25" height="22" rx="2" fill="#161616"/><rect x="1832" y="190" width="26" height="22" rx="2" fill="#161616"/>
<path d="M1776 202 Q1784.5 193 1793 202 Q1784.5 211 1776 202Z" fill="none" stroke="#2d8ceb" stroke-width="2"/><circle cx="1784.5" cy="202" r="3" fill="#2d8ceb"/>
<path d="M1805 198 L1809 198 L1814 193 L1814 210 L1809 205 L1805 205Z" fill="#2d8ceb"/><path d="M1817 197 Q1820 201.5 1817 206 M1820 195 Q1824 201.5 1820 208" fill="none" stroke="#2d8ceb" stroke-width="1.5"/>
<rect x="1838" y="195" width="14" height="13" fill="none" stroke="#2d8ceb" stroke-width="1.6"/><circle cx="1845" cy="201.5" r="1.3" fill="#2d8ceb"/>
<rect x="1836" y="193" width="4" height="4" fill="#2d8ceb"/><rect x="1850" y="193" width="4" height="4" fill="#2d8ceb"/><rect x="1836" y="206" width="4" height="4" fill="#2d8ceb"/><rect x="1850" y="206" width="4" height="4" fill="#2d8ceb"/>
<rect x="1863" y="190" width="1" height="22" fill="#333"/>
<path d="M1877 198 L1877 207 L1891 207 L1891 198" fill="none" stroke="#b3b3b3" stroke-width="2"/><path d="M1881 203 Q1881 196 1888 196 L1888 193 L1893 197.5 L1888 202 L1888 199 Q1884 199 1881 203Z" fill="#b3b3b3"/>
</svg>
<div class="a" style="left:1645px;top:216px;width:260px;height:2px;background:#161616"></div>
<div class="t" style="left:1661px;top:228px;color:#c8c8c8">Align</div>
<div class="ham" style="left:1880px;top:232px"></div>
<div class="t" style="left:1653px;top:261px;color:#999">Align Layers to:</div>
<div class="a" style="left:1762px;top:258px;width:137px;height:23px;background:#1c1c1c;border:1px solid #2c2c2c;border-radius:3px"></div>
<div class="t" style="left:1771px;top:261px;color:#d0d0d0;font-size:13.5px">Composition</div>
<svg style="left:0;top:0" width="1" height="1">
<path d="M1882 266 L1886 270 L1890 266" fill="none" stroke="#bbb" stroke-width="1.2"/>
<g fill="#b3b3b3">
<rect x="1660" y="288" width="2" height="22"/><rect x="1663" y="291" width="10" height="6"/><rect x="1663" y="301" width="15" height="6"/>
<rect x="1711" y="288" width="2" height="22"/><rect x="1706" y="291" width="12" height="6"/><rect x="1703" y="301" width="17" height="6"/>
<rect x="1764" y="288" width="2" height="22"/><rect x="1753" y="291" width="10" height="6"/><rect x="1747" y="301" width="16" height="6"/>
<rect x="1786" y="288" width="22" height="2"/><rect x="1789" y="291" width="6" height="16"/><rect x="1799" y="291" width="6" height="10"/>
<rect x="1829" y="297" width="22" height="2"/><rect x="1832" y="290" width="6" height="16"/><rect x="1842" y="292" width="6" height="12"/>
<rect x="1872" y="308" width="22" height="2"/><rect x="1875" y="290" width="6" height="17"/><rect x="1885" y="297" width="6" height="10"/>
</g></svg>
<div class="a" style="left:1645px;top:321px;width:260px;height:1px;background:#161616"></div>
<div class="t" style="left:1661px;top:327px;color:#c8c8c8">Void</div>
<div class="ham" style="left:1880px;top:331px"></div>
<div class="a" style="left:1647px;top:352px;width:255px;height:58px;border:1px solid #2c2c2c;border-radius:4px"></div>
<div class="a" style="left:1659px;top:365px;width:74px;height:42px;background:#202020"></div>
<div class="a" style="left:1736px;top:365px;width:75px;height:42px;background:#202020"></div>
<div class="a" style="left:1814px;top:365px;width:76px;height:42px;background:#202020"></div>
<svg style="left:0;top:0" width="1" height="1">
<rect x="1673" y="386" width="5" height="6" fill="none" stroke="#ccc" stroke-width="1"/><rect x="1675" y="388" width="1" height="2" fill="#ccc"/>
<circle cx="1744" cy="389" r="3" fill="none" stroke="#ccc" stroke-width="1.2"/><circle cx="1744.5" cy="388.5" r="1.2" fill="#ccc"/>
<path d="M1822 386 L1825 389 L1822 392 L1819 389Z" fill="none" stroke="#ccc" stroke-width="1.2"/>
</svg>
<div class="t" style="left:1690px;top:382px;color:#c8c8c8">Void</div>
<div class="t" style="left:1760px;top:382px;color:#c8c8c8">Variant</div>
<div class="t" style="left:1838px;top:382px;color:#c8c8c8">Volume</div>
<div class="a" style="left:1645px;top:414px;width:260px;height:1px;background:#161616"></div>
<div class="t" style="left:1661px;top:426px;color:#c8c8c8">EaseCopy</div>
<div class="ham" style="left:1880px;top:430px"></div>
<div class="a" style="left:1647px;top:452px;width:255px;height:100px;border:1px solid #2c2c2c;border-radius:4px"></div>
<div class="a" style="left:1657px;top:460px;width:107px;height:78px;background:#2f3a66"></div>
<div class="a" style="left:1779px;top:460px;width:121px;height:79px;background:#6a2f3c"></div>
<div class="a" style="left:1657px;top:470px;width:8px;height:1px;background:#555a80"></div>
<div class="a" style="left:1709px;top:470px;width:55px;height:1px;background:#555a80"></div>
<div class="t" style="left:1671px;top:462px;color:#8f92a8;font-size:13px">Co...</div>
<div class="a" style="left:1779px;top:470px;width:9px;height:1px;background:#8a5560"></div>
<div class="a" style="left:1838px;top:470px;width:62px;height:1px;background:#8a5560"></div>
<div class="t" style="left:1794px;top:462px;color:#b8a0a5;font-size:13px">Paste</div>
<div class="a" style="left:1664px;top:482px;width:25px;height:25px;border:2px solid #8a8a8a;background:#232323"></div>
<div class="t" style="left:1672px;top:486px;color:#bbb;font-size:13px">?</div>
<div class="a" style="left:1701px;top:482px;width:57px;height:25px;border:2px solid #8a8a8a;background:#232323"></div>
<div class="t" style="left:1713px;top:486px;color:#bbb;font-size:13.5px">Copy</div>
<svg style="left:0;top:0" width="1" height="1"><circle cx="1676" cy="522" r="11" fill="none" stroke="#8a8a8a" stroke-width="2"/><path d="M1669 516 L1683 516 L1681 529 L1671 529Z" fill="#aaa"/><rect x="1669" y="514" width="14" height="3" fill="#ddd"/></svg>
<div class="t" style="left:1723px;top:514px;color:#aab;font-size:13.5px">0</div>
<div class="a" style="left:1788px;top:482px;width:56px;height:25px;border:2px solid #8a8a8a;background:#232323"></div>
<div class="t" style="left:1800px;top:486px;color:#bbb;font-size:13.5px">Ease</div>
<div class="a" style="left:1856px;top:482px;width:50px;height:25px;border:2px solid #8a8a8a;background:#232323"></div>
<div class="t" style="left:1867px;top:486px;color:#bbb;font-size:13.5px">Value</div>
<div class="a" style="left:1900px;top:460px;width:19px;height:90px;background:#232323"></div>
<div class="a" style="left:1798px;top:514px;width:17px;height:17px;border:2px solid #8a8a8a"></div>
<div class="t" style="left:1819px;top:514px;color:#aaa;font-size:13.5px">Pass-through</div>
<div class="a" style="left:1900px;top:452px;width:2px;height:100px;background:#2c2c2c"></div>
<div class="a" style="left:1903px;top:452px;width:16px;height:110px;background:#232323"></div>
<div class="a" style="left:1645px;top:556px;width:260px;height:1px;background:#161616"></div>
<div class="t" style="left:1661px;top:567px;color:#c8c8c8">Anchor Point Mover</div>
<div class="ham" style="left:1880px;top:571px"></div>
<svg style="left:0;top:0" width="1" height="1"><rect x="1667.5" y="614.5" width="90" height="90" fill="none" stroke="#777" stroke-width="1"/><g fill="#2a2a2a"><rect x="1696" y="614" width="2" height="91"/><rect x="1727" y="614" width="2" height="91"/><rect x="1667" y="643" width="91" height="2"/><rect x="1667" y="674" width="91" height="2"/></g><g transform="translate(1682 629) rotate(-45)"><path d="M0 -9 L7 -2 L2.5 -2 L2.5 9 L-2.5 9 L-2.5 -2 L-7 -2Z" fill="#e0e0e0"/></g><g transform="translate(1712 629) rotate(0)"><path d="M0 -9 L7 -2 L2.5 -2 L2.5 9 L-2.5 9 L-2.5 -2 L-7 -2Z" fill="#e0e0e0"/></g><g transform="translate(1742 629) rotate(45)"><path d="M0 -9 L7 -2 L2.5 -2 L2.5 9 L-2.5 9 L-2.5 -2 L-7 -2Z" fill="#e0e0e0"/></g><g transform="translate(1682 659) rotate(-90)"><path d="M0 -9 L7 -2 L2.5 -2 L2.5 9 L-2.5 9 L-2.5 -2 L-7 -2Z" fill="#e0e0e0"/></g><g transform="translate(1742 659) rotate(90)"><path d="M0 -9 L7 -2 L2.5 -2 L2.5 9 L-2.5 9 L-2.5 -2 L-7 -2Z" fill="#e0e0e0"/></g><g transform="translate(1682 689) rotate(-135)"><path d="M0 -9 L7 -2 L2.5 -2 L2.5 9 L-2.5 9 L-2.5 -2 L-7 -2Z" fill="#e0e0e0"/></g><g transform="translate(1712 689) rotate(180)"><path d="M0 -9 L7 -2 L2.5 -2 L2.5 9 L-2.5 9 L-2.5 -2 L-7 -2Z" fill="#e0e0e0"/></g><g transform="translate(1742 689) rotate(135)"><path d="M0 -9 L7 -2 L2.5 -2 L2.5 9 L-2.5 9 L-2.5 -2 L-7 -2Z" fill="#e0e0e0"/></g><circle cx="1712" cy="659" r="4.5" fill="none" stroke="#e0e0e0" stroke-width="1.8"/><path d="M1712 651 L1712 654 M1712 664 L1712 667 M1704 659 L1707 659 M1717 659 L1720 659" stroke="#e0e0e0" stroke-width="1.8"/></svg>
<div class="a" style="left:1645px;top:715px;width:260px;height:1px;background:#333"></div>
<div class="t" style="left:1661px;top:726px;color:#999">Audio</div>
<div class="a" style="left:1645px;top:751px;width:260px;height:2px;background:#161616"></div>
<div class="t" style="left:1661px;top:764px;color:#999">Effects &amp; Presets</div>
<div class="a" style="left:1645px;top:789px;width:260px;height:2px;background:#161616"></div>


<!-- TIMELINE -->
<div class="a" style="left:32px;top:591px;width:13px;height:12px;background:#850000"></div>
<div class="t" style="left:61px;top:590px;color:#9a9a9a">Comp 2</div>
<svg style="left:0;top:0" width="1" height="1"><path d="M159 596 L165 602 M165 596 L159 602" stroke="#aaa" stroke-width="1.3"/></svg>
<div class="a" style="left:177px;top:591px;width:13px;height:12px;background:#850000"></div>
<div class="t" style="left:204px;top:590px;color:#d0d0d0">Comp 1</div>
<div class="ham" style="left:264px;top:594px"></div>
<div class="a" style="left:158px;top:611px;width:118px;height:2px;background:#c8c8c8"></div>
<div class="t" style="left:19px;top:618px;color:#2f8ff0;font-size:19.5px;font-weight:bold;line-height:22px">0:00:00:00</div>
<div class="t" style="left:15px;top:642px;color:#2a72c0;font-size:12.4px;line-height:14px">00000 (30.00 fps)</div>
<div class="a" style="left:134px;top:625px;width:647px;height:24px;background:#161616;border:1px solid #1c1c1c;border-radius:3px"></div>
<svg style="left:0;top:0" width="1920" height="1000" viewBox="0 0 1920 1000"><g fill="#b3b3b3">
<circle cx="150" cy="635" r="4.5" fill="none" stroke="#bbb" stroke-width="1.4"/><path d="M147 638 L142 643" stroke="#bbb" stroke-width="1.6"/><path d="M156 639 L162 639 L159 642Z" fill="#bbb"/>
<!-- timeline header icons -->
<rect x="802" y="632" width="6" height="3"/><rect x="808" y="633" width="2" height="9" /><rect x="810" y="637" width="6" height="3"/><rect x="810" y="641" width="6" height="3"/><path d="M818 644 L824 644 L821 647Z"/>
<rect x="845" y="640" width="21" height="6"/><path d="M848 639 Q848 630 855.5 630 Q863 630 863 639Z"/><circle cx="852" cy="636" r="1.5" fill="#232323"/><circle cx="859" cy="636" r="1.5" fill="#232323"/>
<rect x="878" y="632" width="15" height="14" rx="1"/><rect x="882" y="630" width="15" height="13" fill="#232323" stroke="#b3b3b3" stroke-width="1.5"/><rect x="885" y="635" width="9" height="2"/>
<circle cx="925" cy="634" r="6"/><circle cx="920" cy="639" r="6" fill="#232323" stroke="#b3b3b3" stroke-width="1.5"/><circle cx="917" cy="642" r="5" fill="none" stroke="#b3b3b3" stroke-width="1.3"/>
<rect x="953" y="630" width="19" height="17" fill="none" stroke="#b3b3b3" stroke-width="1.5"/><path d="M956 634 Q961 634 963 639 Q965 644 970 644" fill="none" stroke="#b3b3b3" stroke-width="1.5"/>
<!-- column header -->
<path d="M9 674 Q16 666 23 674 Q16 682 9 674Z" fill="none" stroke="#b3b3b3" stroke-width="1.6"/><circle cx="16" cy="674" r="2.3"/>
<path d="M27 670 L31 670 L36 665 L36 683 L31 678 L27 678Z"/><path d="M38 669 Q41 674 38 679" fill="none" stroke="#b3b3b3" stroke-width="1.4"/>
<circle cx="54" cy="674" r="4"/>
<path d="M68 672 L68 669 Q68 665 72.5 665 Q77 665 77 669 L77 672" fill="none" stroke="#b3b3b3" stroke-width="1.7"/><rect x="66" y="672" width="13" height="10" rx="1"/><rect x="71.5" y="675" width="2" height="4" fill="#232323"/>
<rect x="86" y="667" width="1" height="15" fill="#3a3a3a"/>
<path d="M104 667 L112 667 L120 675 L113 682 L104 674Z"/><circle cx="108" cy="671" r="1.5" fill="#232323"/>
<rect x="127" y="667" width="1" height="15" fill="#3a3a3a"/>
<rect x="167" y="667" width="1" height="15" fill="#3a3a3a"/>
<rect x="391" y="667" width="1" height="15" fill="#3a3a3a"/>
<path d="M398 676 L404 676 L404 674 Q399 674 400 669 Q401 666 405.5 666 Q410 666 411 669 Q412 674 407 674 L407 676 L413 676 L413 677.5 L407 677.5 L406 680 L405 680 L404 677.5 L398 677.5Z"/><circle cx="403" cy="670.5" r="1.4" fill="#232323"/><circle cx="408" cy="670.5" r="1.4" fill="#232323"/>
<circle cx="424.5" cy="673.5" r="3" fill="none" stroke="#b3b3b3" stroke-width="1.5"/><path d="M424.5 667 L424.5 669 M424.5 678 L424.5 680 M418 673.5 L420 673.5 M429 673.5 L431 673.5 M420 669 L421.3 670.3 M427.7 676.7 L429 678 M429 669 L427.7 670.3 M421.3 676.7 L420 678" stroke="#b3b3b3" stroke-width="1.2"/>
<circle cx="437.5" cy="667" r="1"/><circle cx="439.5" cy="669" r="1"/><circle cx="441.5" cy="671" r="1"/><circle cx="443.5" cy="673" r="1"/><circle cx="445.5" cy="675" r="1"/><circle cx="447.5" cy="677" r="1"/><circle cx="449" cy="678.5" r="1.1"/>
</g></svg>
<div class="a" style="left:2px;top:660px;width:991px;height:1px;background:#1c1c1c"></div><div class="t" style="left:134px;top:667px;color:#a0a0a0;font-size:11px">#</div>
<div class="t" style="left:175px;top:667px;color:#a0a0a0;font-size:11px">Source Name</div>
<div class="t" style="left:455px;top:664px;color:#b3b3b3;font-size:15px;font-style:italic;font-family:'Liberation Serif'">fx</div>
<svg style="left:0;top:0" width="1" height="1"><g fill="#b3b3b3">
<path d="M472 669 L472 681 L486 681" fill="none" stroke="#b3b3b3" stroke-width="1.2"/><rect x="474" y="666" width="14" height="13"/><rect x="477" y="671" width="8" height="2" fill="#232323"/><g fill="#232323"><rect x="475" y="667.5" width="1" height="1.5"/><rect x="475" y="670.5" width="1" height="1.5"/><rect x="475" y="673.5" width="1" height="1.5"/><rect x="475" y="676.5" width="1" height="1.5"/><rect x="486" y="667.5" width="1" height="1.5"/><rect x="486" y="670.5" width="1" height="1.5"/><rect x="486" y="673.5" width="1" height="1.5"/><rect x="486" y="676.5" width="1" height="1.5"/></g>
<circle cx="495.5" cy="677.5" r="4.5" fill="none" stroke="#b3b3b3" stroke-width="1"/><circle cx="498" cy="675" r="5" fill="#232323" stroke="#b3b3b3" stroke-width="1"/><circle cx="501.5" cy="672" r="5.5" fill="#666" stroke="#b3b3b3" stroke-width="1.2"/>
<circle cx="518.5" cy="673.5" r="6.3" fill="none" stroke="#b3b3b3" stroke-width="1.3"/><path d="M523 669 A6.3 6.3 0 0 1 514 678 Z"/>
<path d="M532 670 L538 667 L544 670 L544 677 L538 680 L532 677Z M532 670 L538 673 L544 670 M538 673 L538 680" fill="none" stroke="#b3b3b3" stroke-width="1.2"/>
<rect x="562" y="667" width="1" height="15" fill="#3a3a3a"/>
<rect x="790" y="667" width="14" height="14"/><circle cx="797" cy="674" r="4.5" fill="#232323"/>
<rect x="808" y="667" width="14" height="14" fill="none" stroke="#b3b3b3" stroke-width="1.5"/><path d="M811 679 L820 668" stroke="#b3b3b3" stroke-width="1.3"/><path d="M814 676 A4 4 0 0 1 818 670 L813 677Z"/>
<rect x="826" y="667" width="1" height="15" fill="#3a3a3a"/>
<rect x="972" y="667" width="1" height="15" fill="#3a3a3a"/>
</g></svg>
<div class="t" style="left:570px;top:667px;color:#a0a0a0;font-size:11.5px">Mode</div>
<div class="t" style="left:664px;top:667px;color:#a0a0a0;font-size:11.5px">T</div>
<div class="t" style="left:685px;top:667px;color:#a0a0a0;font-size:11.5px">Track Matte</div>
<div class="t" style="left:834px;top:667px;color:#a0a0a0;font-size:11.5px">Parent &amp; Link</div>
<svg style="left:0;top:0" width="1920" height="1000" viewBox="0 0 1920 1000"><rect x="2" y="702.8" width="991" height="1.2" fill="#1b1b1b"/><rect x="2" y="724.0" width="991" height="1.2" fill="#1b1b1b"/><rect x="2" y="745.2" width="991" height="1.2" fill="#1b1b1b"/><rect x="2" y="766.5" width="991" height="1.2" fill="#1b1b1b"/><rect x="2" y="787.8" width="991" height="1.2" fill="#1b1b1b"/><rect x="2" y="809.0" width="991" height="1.2" fill="#1b1b1b"/><rect x="2" y="830.2" width="991" height="1.2" fill="#1b1b1b"/><rect x="2" y="851.5" width="991" height="1.2" fill="#1b1b1b"/><rect x="2" y="872.8" width="991" height="1.2" fill="#1b1b1b"/><rect x="2" y="894.0" width="991" height="1.2" fill="#1b1b1b"/><rect x="2" y="915.2" width="991" height="1.2" fill="#1b1b1b"/><rect x="2" y="936.5" width="991" height="1.2" fill="#1b1b1b"/><rect x="2" y="957.8" width="991" height="1.2" fill="#1b1b1b"/><rect x="2" y="979.0" width="991" height="1.2" fill="#1b1b1b"/></svg><div class="a" style="left:7px;top:683.625px;width:18px;height:17px;background:#1b1b1b"></div><svg style="left:0;top:0" width="1" height="1"><path d="M9 692.625 Q16 684.625 23 692.625 Q16 700.625 9 692.625Z" fill="none" stroke="#d0d0d0" stroke-width="1.6"/><circle cx="16" cy="692.625" r="2.5" fill="#d0d0d0"/></svg><svg style="left:0;top:0" width="1" height="1"><path d="M159 690.625 L163.5 695.125 L168 690.625" fill="none" stroke="#aaa" stroke-width="1.3"/></svg><div class="t" style="left:178px;top:684.6px;color:#b8b8b8;font-size:13.7px">Material Options : Rectangle 1</div><div class="a" style="left:181px;top:712.875px;width:2px;height:2px;background:#3a3a3a"></div><svg style="left:0;top:0" width="1" height="1"><g fill="none" stroke="#c0c0c0" stroke-width="1.5"><circle cx="203" cy="715.375" r="6.5"/><path d="M200 706.875 L206 706.875 M203 706.875 L203 708.875"/></g></svg><div class="t" style="left:219px;top:705.9px;color:#b8b8b8;font-size:14px">Front Color</div><div class="a" style="left:397px;top:704.9px;width:29px;height:19px;background:#555;padding:2px"><div style="width:100%;height:100%;background:#fed23f"></div></div><div class="a" style="left:429px;top:704.9px;width:31px;height:19px;border:2px solid #666;background:#232323"></div><svg style="left:0;top:0" width="1" height="1"><path d="M434 713.875 L448 712.375 L448 715.375Z" fill="none" stroke="#ccc" stroke-width="1.2"/><rect x="447" y="710.375" width="8" height="7" rx="1" fill="#ccc"/></svg><svg style="left:0;top:0" width="1" height="1"><path d="M856.40 711.88 L856.13 711.82 L855.85 711.82 L855.55 711.89 L855.25 712.04 L854.98 712.25 L854.75 712.54 L854.57 712.88 L854.47 713.27 L854.45 713.70 L854.52 714.14 L854.69 714.58 L854.95 714.98 L855.31 715.34 L855.75 715.63 L856.26 715.84 L856.82 715.93 L857.41 715.92 L858.00 715.77 L858.57 715.51 L859.09 715.12 L859.53 714.62 L859.88 714.02 L860.10 713.34 L860.19 712.62 L860.13 711.87 L859.91 711.13 L859.55 710.42 L859.03 709.79 L858.38 709.27 L857.63 708.87 L856.78 708.63 L855.89 708.55 L854.98 708.66 L854.09 708.95 L853.26 709.43 L852.52 710.07 L851.92 710.87 L851.47 711.79 L851.21 712.79 L851.16 713.85 L851.32 714.92 L851.69 715.96 L852.28 716.92 L853.05 717.76 L854.00 718.44 L855.08 718.93 L856.25 719.20 L857.48 719.23 L858.70 719.02 L859.89 718.56 L860.97 717.87 L861.91 716.96 L862.66 715.86 L863.19 714.62 L863.47 713.27 L863.48 711.88 L863.21 710.50 L862.66 709.17 L861.85 707.97 L860.80 706.93" fill="none" stroke="#c0c0c0" stroke-width="1.4"/></svg><div class="a" style="left:181px;top:734.125px;width:2px;height:2px;background:#3a3a3a"></div><svg style="left:0;top:0" width="1" height="1"><g fill="none" stroke="#c0c0c0" stroke-width="1.5"><circle cx="203" cy="736.625" r="6.5"/><path d="M200 728.125 L206 728.125 M203 728.125 L203 730.125"/></g></svg><div class="t" style="left:219px;top:727.1px;color:#b8b8b8;font-size:14px">Bevel Color</div><div class="a" style="left:397px;top:726.1px;width:29px;height:19px;background:#555;padding:2px"><div style="width:100%;height:100%;background:#da6a2f"></div></div><div class="a" style="left:429px;top:726.1px;width:31px;height:19px;border:2px solid #666;background:#232323"></div><svg style="left:0;top:0" width="1" height="1"><path d="M434 735.125 L448 733.625 L448 736.625Z" fill="none" stroke="#ccc" stroke-width="1.2"/><rect x="447" y="731.625" width="8" height="7" rx="1" fill="#ccc"/></svg><svg style="left:0;top:0" width="1" height="1"><path d="M856.40 733.13 L856.13 733.07 L855.85 733.07 L855.55 733.14 L855.25 733.29 L854.98 733.50 L854.75 733.79 L854.57 734.13 L854.47 734.52 L854.45 734.95 L854.52 735.39 L854.69 735.83 L854.95 736.23 L855.31 736.59 L855.75 736.88 L856.26 737.09 L856.82 737.18 L857.41 737.17 L858.00 737.02 L858.57 736.76 L859.09 736.37 L859.53 735.87 L859.88 735.27 L860.10 734.59 L860.19 733.87 L860.13 733.12 L859.91 732.38 L859.55 731.67 L859.03 731.04 L858.38 730.52 L857.63 730.12 L856.78 729.88 L855.89 729.80 L854.98 729.91 L854.09 730.20 L853.26 730.68 L852.52 731.32 L851.92 732.12 L851.47 733.04 L851.21 734.04 L851.16 735.10 L851.32 736.17 L851.69 737.21 L852.28 738.17 L853.05 739.01 L854.00 739.69 L855.08 740.18 L856.25 740.45 L857.48 740.48 L858.70 740.27 L859.89 739.81 L860.97 739.12 L861.91 738.21 L862.66 737.11 L863.19 735.87 L863.47 734.52 L863.48 733.13 L863.21 731.75 L862.66 730.42 L861.85 729.22 L860.80 728.18" fill="none" stroke="#c0c0c0" stroke-width="1.4"/></svg><div class="a" style="left:181px;top:755.375px;width:2px;height:2px;background:#3a3a3a"></div><svg style="left:0;top:0" width="1" height="1"><g fill="none" stroke="#c0c0c0" stroke-width="1.5"><circle cx="203" cy="757.875" r="6.5"/><path d="M200 749.375 L206 749.375 M203 749.375 L203 751.375"/></g></svg><div class="t" style="left:219px;top:748.4px;color:#b8b8b8;font-size:14px">Side Color</div><div class="a" style="left:397px;top:747.4px;width:29px;height:19px;background:#555;padding:2px"><div style="width:100%;height:100%;background:#7a2329"></div></div><div class="a" style="left:429px;top:747.4px;width:31px;height:19px;border:2px solid #666;background:#232323"></div><svg style="left:0;top:0" width="1" height="1"><path d="M434 756.375 L448 754.875 L448 757.875Z" fill="none" stroke="#ccc" stroke-width="1.2"/><rect x="447" y="752.875" width="8" height="7" rx="1" fill="#ccc"/></svg><svg style="left:0;top:0" width="1" height="1"><path d="M856.40 754.38 L856.13 754.32 L855.85 754.32 L855.55 754.39 L855.25 754.54 L854.98 754.75 L854.75 755.04 L854.57 755.38 L854.47 755.77 L854.45 756.20 L854.52 756.64 L854.69 757.08 L854.95 757.48 L855.31 757.84 L855.75 758.13 L856.26 758.34 L856.82 758.43 L857.41 758.42 L858.00 758.27 L858.57 758.01 L859.09 757.62 L859.53 757.12 L859.88 756.52 L860.10 755.84 L860.19 755.12 L860.13 754.37 L859.91 753.63 L859.55 752.92 L859.03 752.29 L858.38 751.77 L857.63 751.37 L856.78 751.13 L855.89 751.05 L854.98 751.16 L854.09 751.45 L853.26 751.93 L852.52 752.57 L851.92 753.37 L851.47 754.29 L851.21 755.29 L851.16 756.35 L851.32 757.42 L851.69 758.46 L852.28 759.42 L853.05 760.26 L854.00 760.94 L855.08 761.43 L856.25 761.70 L857.48 761.73 L858.70 761.52 L859.89 761.06 L860.97 760.37 L861.91 759.46 L862.66 758.36 L863.19 757.12 L863.47 755.77 L863.48 754.38 L863.21 753.00 L862.66 751.67 L861.85 750.47 L860.80 749.43" fill="none" stroke="#c0c0c0" stroke-width="1.4"/></svg><div class="a" style="left:181px;top:776.625px;width:2px;height:2px;background:#3a3a3a"></div><svg style="left:0;top:0" width="1" height="1"><g fill="none" stroke="#c0c0c0" stroke-width="1.5"><circle cx="203" cy="779.125" r="6.5"/><path d="M200 770.625 L206 770.625 M203 770.625 L203 772.625"/></g></svg><div class="t" style="left:219px;top:769.6px;color:#b8b8b8;font-size:14px">Back Color</div><div class="a" style="left:397px;top:768.6px;width:29px;height:19px;background:#555;padding:2px"><div style="width:100%;height:100%;background:#fed23f"></div></div><div class="a" style="left:429px;top:768.6px;width:31px;height:19px;border:2px solid #666;background:#232323"></div><svg style="left:0;top:0" width="1" height="1"><path d="M434 777.625 L448 776.125 L448 779.125Z" fill="none" stroke="#ccc" stroke-width="1.2"/><rect x="447" y="774.125" width="8" height="7" rx="1" fill="#ccc"/></svg><svg style="left:0;top:0" width="1" height="1"><path d="M856.40 775.63 L856.13 775.57 L855.85 775.57 L855.55 775.64 L855.25 775.79 L854.98 776.00 L854.75 776.29 L854.57 776.63 L854.47 777.02 L854.45 777.45 L854.52 777.89 L854.69 778.33 L854.95 778.73 L855.31 779.09 L855.75 779.38 L856.26 779.59 L856.82 779.68 L857.41 779.67 L858.00 779.52 L858.57 779.26 L859.09 778.87 L859.53 778.37 L859.88 777.77 L860.10 777.09 L860.19 776.37 L860.13 775.62 L859.91 774.88 L859.55 774.17 L859.03 773.54 L858.38 773.02 L857.63 772.62 L856.78 772.38 L855.89 772.30 L854.98 772.41 L854.09 772.70 L853.26 773.18 L852.52 773.82 L851.92 774.62 L851.47 775.54 L851.21 776.54 L851.16 777.60 L851.32 778.67 L851.69 779.71 L852.28 780.67 L853.05 781.51 L854.00 782.19 L855.08 782.68 L856.25 782.95 L857.48 782.98 L858.70 782.77 L859.89 782.31 L860.97 781.62 L861.91 780.71 L862.66 779.61 L863.19 778.37 L863.47 777.02 L863.48 775.63 L863.21 774.25 L862.66 772.92 L861.85 771.72 L860.80 770.68" fill="none" stroke="#c0c0c0" stroke-width="1.4"/></svg><div class="a" style="left:7px;top:789.875px;width:18px;height:17px;background:#1b1b1b"></div><svg style="left:0;top:0" width="1" height="1"><path d="M9 798.875 Q16 790.875 23 798.875 Q16 806.875 9 798.875Z" fill="none" stroke="#d0d0d0" stroke-width="1.6"/><circle cx="16" cy="798.875" r="2.5" fill="#d0d0d0"/></svg><svg style="left:0;top:0" width="1" height="1"><path d="M137 794.375 L141.5 798.875 L137 803.375" fill="none" stroke="#aaa" stroke-width="1.3"/></svg><div class="t" style="left:157px;top:790.9px;color:#b8b8b8;font-size:14px">Twist 1</div><svg style="left:0;top:0" width="1" height="1"><path d="M116 818.125 L120.5 822.625 L125 818.125" fill="none" stroke="#aaa" stroke-width="1.3"/></svg><div class="t" style="left:135px;top:812.1px;color:#b8b8b8;font-size:14px">Transform</div><div class="t" style="left:398px;top:811.1px;color:#2f8ff0;font-size:13.5px">Reset</div><div class="a" style="left:139px;top:840.375px;width:2px;height:2px;background:#3a3a3a"></div><svg style="left:0;top:0" width="1" height="1"><g fill="none" stroke="#c0c0c0" stroke-width="1.5"><circle cx="160" cy="842.875" r="6.5"/><path d="M157 834.375 L163 834.375 M160 834.375 L160 836.375"/></g></svg><div class="t" style="left:177px;top:833.4px;color:#b8b8b8;font-size:14px">Scale</div><div class="a" style="left:396px;top:832.4px;width:17px;height:18px;background:#1d1d1d"></div><svg style="left:0;top:0" width="1" height="1"><g fill="none" stroke="#c0c0c0" stroke-width="1.6"><rect x="398" y="839.375" width="8" height="5" rx="2.5"/><rect x="403" y="841.375" width="8" height="5" rx="2.5"/></g></svg><div class="t" style="left:419px;top:832.4px;color:#2f8ff0;font-size:13.3px">1000.0<span style="color:#999">,</span>1000.0<span style="color:#999">,</span>1000.0</div><svg style="left:0;top:0" width="1" height="1"><path d="M856.40 839.38 L856.13 839.32 L855.85 839.32 L855.55 839.39 L855.25 839.54 L854.98 839.75 L854.75 840.04 L854.57 840.38 L854.47 840.77 L854.45 841.20 L854.52 841.64 L854.69 842.08 L854.95 842.48 L855.31 842.84 L855.75 843.13 L856.26 843.34 L856.82 843.43 L857.41 843.42 L858.00 843.27 L858.57 843.01 L859.09 842.62 L859.53 842.12 L859.88 841.52 L860.10 840.84 L860.19 840.12 L860.13 839.37 L859.91 838.63 L859.55 837.92 L859.03 837.29 L858.38 836.77 L857.63 836.37 L856.78 836.13 L855.89 836.05 L854.98 836.16 L854.09 836.45 L853.26 836.93 L852.52 837.57 L851.92 838.37 L851.47 839.29 L851.21 840.29 L851.16 841.35 L851.32 842.42 L851.69 843.46 L852.28 844.42 L853.05 845.26 L854.00 845.94 L855.08 846.43 L856.25 846.70 L857.48 846.73 L858.70 846.52 L859.89 846.06 L860.97 845.37 L861.91 844.46 L862.66 843.36 L863.19 842.12 L863.47 840.77 L863.48 839.38 L863.21 838.00 L862.66 836.67 L861.85 835.47 L860.80 834.43" fill="none" stroke="#c0c0c0" stroke-width="1.4"/></svg><svg style="left:0;top:0" width="1" height="1"><path d="M116 860.625 L120.5 865.125 L125 860.625" fill="none" stroke="#aaa" stroke-width="1.3"/></svg><div class="a" style="left:131px;top:852.6px;width:260px;height:19px;background:#4a4a4a"></div><div class="t" style="left:135px;top:854.6px;color:#c0c0c0;font-size:13.8px">Geometry Options</div><div class="a" style="left:139px;top:882.875px;width:2px;height:2px;background:#3a3a3a"></div><div class="t" style="left:157px;top:875.9px;color:#b8b8b8;font-size:14px">Bevel Style</div><div class="a" style="left:397px;top:873.9px;width:160px;height:20px;background:#1c1c1c;border:1px solid #2a2a2a;border-radius:2px"></div><div class="t" style="left:407px;top:875.9px;color:#d0d0d0;font-size:13.5px">Convex</div><svg style="left:0;top:0" width="1" height="1"><path d="M541 881.875 L545 885.875 L549 881.875" fill="none" stroke="#bbb" stroke-width="1.2"/></svg><svg style="left:0;top:0" width="1" height="1"><path d="M856.40 881.88 L856.13 881.82 L855.85 881.82 L855.55 881.89 L855.25 882.04 L854.98 882.25 L854.75 882.54 L854.57 882.88 L854.47 883.27 L854.45 883.70 L854.52 884.14 L854.69 884.58 L854.95 884.98 L855.31 885.34 L855.75 885.63 L856.26 885.84 L856.82 885.93 L857.41 885.92 L858.00 885.77 L858.57 885.51 L859.09 885.12 L859.53 884.62 L859.88 884.02 L860.10 883.34 L860.19 882.62 L860.13 881.87 L859.91 881.13 L859.55 880.42 L859.03 879.79 L858.38 879.27 L857.63 878.87 L856.78 878.63 L855.89 878.55 L854.98 878.66 L854.09 878.95 L853.26 879.43 L852.52 880.07 L851.92 880.87 L851.47 881.79 L851.21 882.79 L851.16 883.85 L851.32 884.92 L851.69 885.96 L852.28 886.92 L853.05 887.76 L854.00 888.44 L855.08 888.93 L856.25 889.20 L857.48 889.23 L858.70 889.02 L859.89 888.56 L860.97 887.87 L861.91 886.96 L862.66 885.86 L863.19 884.62 L863.47 883.27 L863.48 881.88 L863.21 880.50 L862.66 879.17 L861.85 877.97 L860.80 876.93" fill="none" stroke="#c0c0c0" stroke-width="1.4"/></svg><div class="a" style="left:139px;top:904.125px;width:2px;height:2px;background:#3a3a3a"></div><svg style="left:0;top:0" width="1" height="1"><g fill="none" stroke="#c0c0c0" stroke-width="1.5"><circle cx="160" cy="906.625" r="6.5"/><path d="M157 898.125 L163 898.125 M160 898.125 L160 900.125"/></g></svg><div class="t" style="left:177px;top:897.1px;color:#b8b8b8;font-size:14px">Bevel Depth</div><div class="t" style="left:398px;top:896.1px;color:#2f8ff0;font-size:13.5px">10.0</div><svg style="left:0;top:0" width="1" height="1"><path d="M856.40 903.13 L856.13 903.07 L855.85 903.07 L855.55 903.14 L855.25 903.29 L854.98 903.50 L854.75 903.79 L854.57 904.13 L854.47 904.52 L854.45 904.95 L854.52 905.39 L854.69 905.83 L854.95 906.23 L855.31 906.59 L855.75 906.88 L856.26 907.09 L856.82 907.18 L857.41 907.17 L858.00 907.02 L858.57 906.76 L859.09 906.37 L859.53 905.87 L859.88 905.27 L860.10 904.59 L860.19 903.87 L860.13 903.12 L859.91 902.38 L859.55 901.67 L859.03 901.04 L858.38 900.52 L857.63 900.12 L856.78 899.88 L855.89 899.80 L854.98 899.91 L854.09 900.20 L853.26 900.68 L852.52 901.32 L851.92 902.12 L851.47 903.04 L851.21 904.04 L851.16 905.10 L851.32 906.17 L851.69 907.21 L852.28 908.17 L853.05 909.01 L854.00 909.69 L855.08 910.18 L856.25 910.45 L857.48 910.48 L858.70 910.27 L859.89 909.81 L860.97 909.12 L861.91 908.21 L862.66 907.11 L863.19 905.87 L863.47 904.52 L863.48 903.13 L863.21 901.75 L862.66 900.42 L861.85 899.22 L860.80 898.18" fill="none" stroke="#c0c0c0" stroke-width="1.4"/></svg><div class="a" style="left:139px;top:925.375px;width:2px;height:2px;background:#3a3a3a"></div><svg style="left:0;top:0" width="1" height="1"><g fill="none" stroke="#c0c0c0" stroke-width="1.5"><circle cx="160" cy="927.875" r="6.5"/><path d="M157 919.375 L163 919.375 M160 919.375 L160 921.375"/></g></svg><div class="t" style="left:177px;top:918.4px;color:#b8b8b8;font-size:14px">Hole Bevel Depth</div><div class="t" style="left:398px;top:917.4px;color:#2f8ff0;font-size:13.5px">100.0<span style="color:#999;font-size:12px"> %</span></div><svg style="left:0;top:0" width="1" height="1"><path d="M856.40 924.38 L856.13 924.32 L855.85 924.32 L855.55 924.39 L855.25 924.54 L854.98 924.75 L854.75 925.04 L854.57 925.38 L854.47 925.77 L854.45 926.20 L854.52 926.64 L854.69 927.08 L854.95 927.48 L855.31 927.84 L855.75 928.13 L856.26 928.34 L856.82 928.43 L857.41 928.42 L858.00 928.27 L858.57 928.01 L859.09 927.62 L859.53 927.12 L859.88 926.52 L860.10 925.84 L860.19 925.12 L860.13 924.37 L859.91 923.63 L859.55 922.92 L859.03 922.29 L858.38 921.77 L857.63 921.37 L856.78 921.13 L855.89 921.05 L854.98 921.16 L854.09 921.45 L853.26 921.93 L852.52 922.57 L851.92 923.37 L851.47 924.29 L851.21 925.29 L851.16 926.35 L851.32 927.42 L851.69 928.46 L852.28 929.42 L853.05 930.26 L854.00 930.94 L855.08 931.43 L856.25 931.70 L857.48 931.73 L858.70 931.52 L859.89 931.06 L860.97 930.37 L861.91 929.46 L862.66 928.36 L863.19 927.12 L863.47 925.77 L863.48 924.38 L863.21 923.00 L862.66 921.67 L861.85 920.47 L860.80 919.43" fill="none" stroke="#c0c0c0" stroke-width="1.4"/></svg><div class="a" style="left:139px;top:946.625px;width:2px;height:2px;background:#3a3a3a"></div><svg style="left:0;top:0" width="1" height="1"><g fill="none" stroke="#c0c0c0" stroke-width="1.5"><circle cx="160" cy="949.125" r="6.5"/><path d="M157 940.625 L163 940.625 M160 940.625 L160 942.625"/></g></svg><div class="t" style="left:177px;top:939.6px;color:#b8b8b8;font-size:14px">Extrusion Depth</div><div class="t" style="left:398px;top:938.6px;color:#2f8ff0;font-size:13.5px">20.0</div><svg style="left:0;top:0" width="1" height="1"><path d="M856.40 945.63 L856.13 945.57 L855.85 945.57 L855.55 945.64 L855.25 945.79 L854.98 946.00 L854.75 946.29 L854.57 946.63 L854.47 947.02 L854.45 947.45 L854.52 947.89 L854.69 948.33 L854.95 948.73 L855.31 949.09 L855.75 949.38 L856.26 949.59 L856.82 949.68 L857.41 949.67 L858.00 949.52 L858.57 949.26 L859.09 948.87 L859.53 948.37 L859.88 947.77 L860.10 947.09 L860.19 946.37 L860.13 945.62 L859.91 944.88 L859.55 944.17 L859.03 943.54 L858.38 943.02 L857.63 942.62 L856.78 942.38 L855.89 942.30 L854.98 942.41 L854.09 942.70 L853.26 943.18 L852.52 943.82 L851.92 944.62 L851.47 945.54 L851.21 946.54 L851.16 947.60 L851.32 948.67 L851.69 949.71 L852.28 950.67 L853.05 951.51 L854.00 952.19 L855.08 952.68 L856.25 952.95 L857.48 952.98 L858.70 952.77 L859.89 952.31 L860.97 951.62 L861.91 950.71 L862.66 949.61 L863.19 948.37 L863.47 947.02 L863.48 945.63 L863.21 944.25 L862.66 942.92 L861.85 941.72 L860.80 940.68" fill="none" stroke="#c0c0c0" stroke-width="1.4"/></svg><svg style="left:0;top:0" width="1" height="1"><path d="M117 964.375 L121.5 968.875 L117 973.375" fill="none" stroke="#aaa" stroke-width="1.3"/></svg><div class="t" style="left:135px;top:960.9px;color:#b8b8b8;font-size:14px">Material Options</div>
<div class="a" style="left:993px;top:622px;width:624px;height:13px;background:#1a1a1a;border-radius:6px"></div>
<div class="a" style="left:1002px;top:623px;width:606px;height:11px;background:#6e6e6e"></div>
<div class="a" style="left:993px;top:623px;width:9px;height:11px;background:#2d8ceb;border-radius:6px 0 0 6px"></div>
<div class="a" style="left:1608px;top:623px;width:9px;height:11px;background:#2d8ceb;border-radius:0 6px 6px 0"></div>
<div class="t" style="left:1003px;top:637px;color:#b0b0b0;font-size:12px">00s</div><div class="t" style="left:1112px;top:637px;color:#b0b0b0;font-size:12px">02s</div><div class="t" style="left:1234px;top:637px;color:#b0b0b0;font-size:12px">04s</div><div class="t" style="left:1355px;top:637px;color:#b0b0b0;font-size:12px">06s</div><div class="t" style="left:1476px;top:637px;color:#b0b0b0;font-size:12px">08s</div><div class="t" style="left:1597px;top:637px;color:#b0b0b0;font-size:12px">10s</div><svg style="left:0;top:0" width="1920" height="1000" viewBox="0 0 1920 1000"><rect x="1123" y="652" width="1" height="7" fill="#999"/><rect x="1245" y="652" width="1" height="7" fill="#999"/><rect x="1366" y="652" width="1" height="7" fill="#999"/><rect x="1487" y="652" width="1" height="7" fill="#999"/><rect x="1608" y="652" width="1" height="7" fill="#999"/><rect x="995" y="660" width="622" height="20" fill="#1a1a1a"/>
<rect x="1002" y="661" width="606" height="18" fill="#666"/>
<path d="M995 661 L1002 661 L1002 679 L995 679 Q993 670 995 661Z" fill="#2d8ceb"/>
<path d="M1608 661 L1613 661 Q1617 670 1613 679 L1608 679Z" fill="#2d8ceb"/>
<rect x="1003" y="680" width="605" height="4" fill="#1db31d"/>
<rect x="995" y="684.0" width="613" height="18.8" fill="#353535"/><rect x="1608" y="684.0" width="9" height="18.8" fill="#282828"/><path d="M999 687.4 L1007 687.4 M999 699.4 L1007 699.4" stroke="#b0b0b0" stroke-width="1.3" fill="none"/><rect x="1001" y="687.4" width="4" height="12.0" fill="#b0b0b0"/><rect x="995" y="705.2" width="613" height="18.8" fill="#353535"/><rect x="1608" y="705.2" width="9" height="18.8" fill="#282828"/><path d="M999 708.6 L1007 708.6 M999 720.6 L1007 720.6" stroke="#b0b0b0" stroke-width="1.3" fill="none"/><rect x="1001" y="708.6" width="4" height="12.0" fill="#b0b0b0"/><rect x="995" y="726.5" width="613" height="18.8" fill="#353535"/><rect x="1608" y="726.5" width="9" height="18.8" fill="#282828"/><path d="M999 729.9 L1007 729.9 M999 741.9 L1007 741.9" stroke="#b0b0b0" stroke-width="1.3" fill="none"/><rect x="1001" y="729.9" width="4" height="12.0" fill="#b0b0b0"/><rect x="995" y="747.8" width="613" height="18.8" fill="#353535"/><rect x="1608" y="747.8" width="9" height="18.8" fill="#282828"/><path d="M999 751.1 L1007 751.1 M999 763.1 L1007 763.1" stroke="#b0b0b0" stroke-width="1.3" fill="none"/><rect x="1001" y="751.1" width="4" height="12.0" fill="#b0b0b0"/><rect x="995" y="769.0" width="613" height="18.8" fill="#353535"/><rect x="1608" y="769.0" width="9" height="18.8" fill="#282828"/><path d="M999 772.4 L1007 772.4 M999 784.4 L1007 784.4" stroke="#b0b0b0" stroke-width="1.3" fill="none"/><rect x="1001" y="772.4" width="4" height="12.0" fill="#b0b0b0"/><rect x="995" y="790.2" width="613" height="18.8" fill="#353535"/><rect x="1608" y="790.2" width="9" height="18.8" fill="#282828"/><path d="M999 793.6 L1007 793.6 M999 805.6 L1007 805.6" stroke="#b0b0b0" stroke-width="1.3" fill="none"/><rect x="1001" y="793.6" width="4" height="12.0" fill="#b0b0b0"/><rect x="995" y="811.5" width="613" height="18.8" fill="#353535"/><rect x="1608" y="811.5" width="9" height="18.8" fill="#282828"/><path d="M999 814.9 L1007 814.9 M999 826.9 L1007 826.9" stroke="#b0b0b0" stroke-width="1.3" fill="none"/><rect x="1001" y="814.9" width="4" height="12.0" fill="#b0b0b0"/><rect x="995" y="832.8" width="613" height="18.8" fill="#353535"/><rect x="1608" y="832.8" width="9" height="18.8" fill="#282828"/><path d="M999 836.1 L1007 836.1 M999 848.1 L1007 848.1" stroke="#b0b0b0" stroke-width="1.3" fill="none"/><rect x="1001" y="836.1" width="4" height="12.0" fill="#b0b0b0"/><rect x="995" y="854.0" width="613" height="18.8" fill="#353535"/><rect x="1608" y="854.0" width="9" height="18.8" fill="#282828"/><path d="M999 857.4 L1007 857.4 M999 869.4 L1007 869.4" stroke="#b0b0b0" stroke-width="1.3" fill="none"/><rect x="1001" y="857.4" width="4" height="12.0" fill="#b0b0b0"/><rect x="995" y="875.2" width="613" height="18.8" fill="#353535"/><rect x="1608" y="875.2" width="9" height="18.8" fill="#282828"/><path d="M999 878.6 L1007 878.6 M999 890.6 L1007 890.6" stroke="#b0b0b0" stroke-width="1.3" fill="none"/><rect x="1001" y="878.6" width="4" height="12.0" fill="#b0b0b0"/><rect x="995" y="896.5" width="613" height="18.8" fill="#353535"/><rect x="1608" y="896.5" width="9" height="18.8" fill="#282828"/><path d="M999 899.9 L1007 899.9 M999 911.9 L1007 911.9" stroke="#b0b0b0" stroke-width="1.3" fill="none"/><rect x="1001" y="899.9" width="4" height="12.0" fill="#b0b0b0"/><rect x="995" y="917.8" width="613" height="18.8" fill="#353535"/><rect x="1608" y="917.8" width="9" height="18.8" fill="#282828"/><path d="M999 921.1 L1007 921.1 M999 933.1 L1007 933.1" stroke="#b0b0b0" stroke-width="1.3" fill="none"/><rect x="1001" y="921.1" width="4" height="12.0" fill="#b0b0b0"/><rect x="995" y="939.0" width="613" height="18.8" fill="#353535"/><rect x="1608" y="939.0" width="9" height="18.8" fill="#282828"/><path d="M999 942.4 L1007 942.4 M999 954.4 L1007 954.4" stroke="#b0b0b0" stroke-width="1.3" fill="none"/><rect x="1001" y="942.4" width="4" height="12.0" fill="#b0b0b0"/><rect x="995" y="960.2" width="613" height="18.8" fill="#353535"/><rect x="1608" y="960.2" width="9" height="18.8" fill="#282828"/><path d="M999 963.6 L1007 963.6 M999 975.6 L1007 975.6" stroke="#b0b0b0" stroke-width="1.3" fill="none"/><rect x="1001" y="963.6" width="4" height="12.0" fill="#b0b0b0"/><rect x="992" y="640" width="2" height="339" fill="#1b1b1b"/>
<rect x="1617" y="681" width="1" height="298" fill="#1a1a1a"/>
<rect x="1618" y="640" width="20" height="339" fill="#1e1e1e"/>
<rect x="1618" y="810" width="19" height="155" rx="9" fill="#333"/>
<rect x="1002.5" y="650" width="1.5" height="329" fill="#2d8ceb"/>
<path d="M996 642 Q996 641 997 641 L1010 641 Q1011 641 1011 642 L1011 649 L1003.5 658 L996 649Z" fill="#2d8ceb"/>
<path d="M1620 662 L1636 662 L1636 674 L1628 681 L1620 674Z" fill="#c8c8c8"/>
<path d="M1622 696 L1630 688 L1630 696Z M1628 692 L1636 692 L1636 700 L1628 700Z" fill="#bbb"/><circle cx="1626" cy="699" r="4" fill="#232323" stroke="#bbb" stroke-width="1.5"/>
<rect x="2" y="979" width="1636" height="1" fill="#0c0c0c"/>
<rect x="2" y="980" width="1125" height="19" fill="#1f1f1f"/>
<rect x="7" y="980" width="21" height="19" fill="none" stroke="#2a2a2a"/>
<rect x="31" y="980" width="21" height="19" fill="none" stroke="#2a2a2a"/>
<g fill="none" stroke="#2d8ceb" stroke-width="1.5"><rect x="11.5" y="984.5" width="8" height="7"/><rect x="14.5" y="987.5" width="8" height="7"/><rect x="17.5" y="990.5" width="8" height="7" fill="#1f1f1f"/>
<circle cx="40.5" cy="988.5" r="5"/><rect x="41.5" y="988.5" width="8" height="8" fill="#1f1f1f"/></g>
<circle cx="21.5" cy="994" r="1.3" fill="#2d8ceb"/><path d="M41.5 988.5 L45 988.5 A5 5 0 0 1 41.5 992Z" fill="#2d8ceb"/>
<path d="M61 982 L64 982 L64 985 L67 985 L67 982 L70 982 L70 987 L73 990 L70 993 L70 998 L67 998 L67 995 L64 995 L64 998 L61 998 L61 993 L58 990 L61 987Z" fill="#aaa"/><rect x="64" y="985" width="3" height="10" fill="#555"/>
<circle cx="87" cy="990" r="5" fill="#aaa"/><rect x="81" y="994" width="15" height="2" fill="#aaa"/><path d="M92 992 L94 985 M94 992 L97 985" stroke="#aaa" stroke-width="1"/>
<path d="M1000 992 L1006 986 L1012 992Z" fill="#c8c8c8"/>
<circle cx="1032" cy="990" r="5" fill="none" stroke="#aaa" stroke-width="2"/><rect x="1038" y="989" width="48" height="1.5" fill="#555"/>
<path d="M1102 993 L1106 986 L1108 989 L1112 983 L1122 993Z" fill="#c8c8c8"/>
</svg>
<div class="t" style="left:133px;top:982px;color:#a8a8a8;font-size:13.3px">Frame Render Time:</div><div class="t" style="left:265px;top:982px;color:#e89a3a;font-size:13.3px;font-weight:bold">452ms</div>
</body></html>
